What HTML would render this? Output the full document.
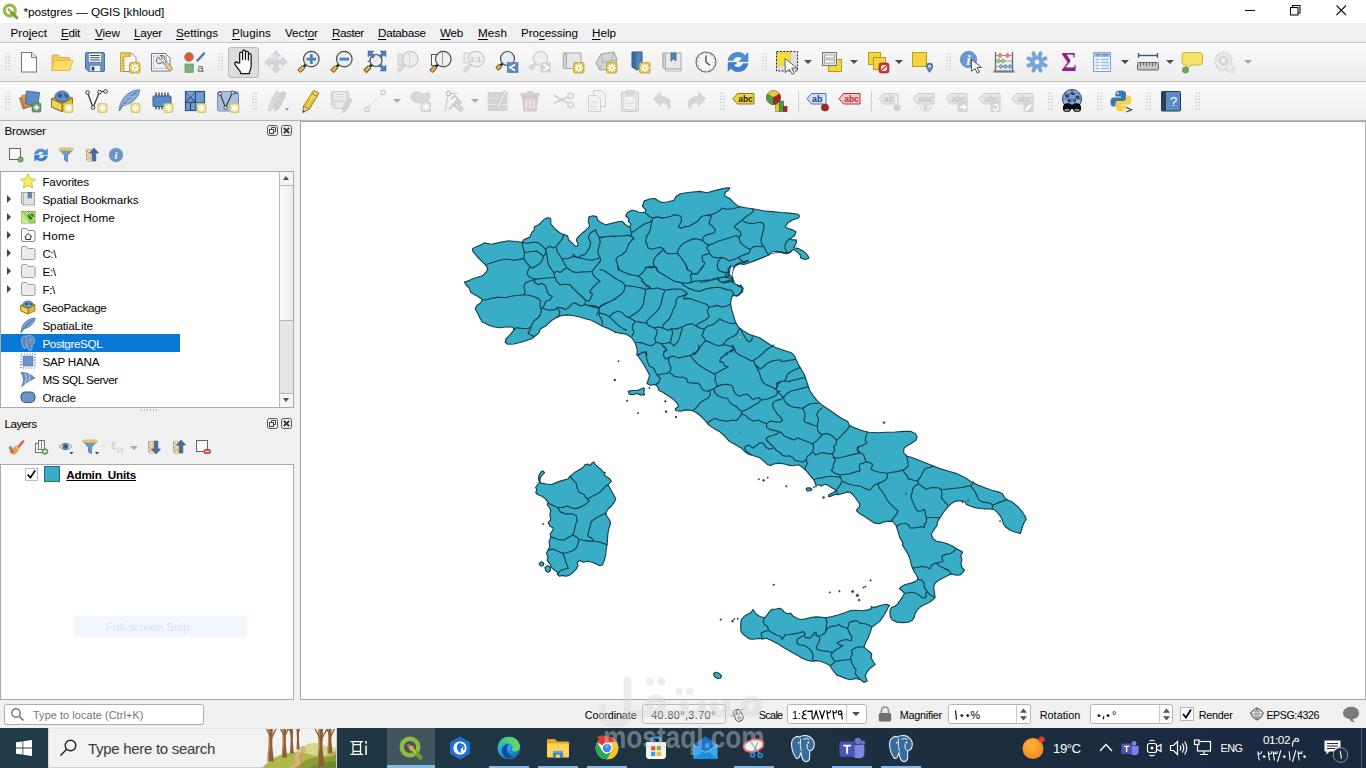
<!DOCTYPE html>
<html>
<head>
<meta charset="utf-8">
<title>*postgres — QGIS [khloud]</title>
<style>
*{box-sizing:border-box;margin:0;padding:0}
html,body{width:1366px;height:768px;overflow:hidden}
body{position:relative;background:#f0f0f0;font-family:"Liberation Sans",sans-serif;font-size:12px;color:#000}
.abs{position:absolute}
#title{left:0;top:0;width:1366px;height:23px;background:#fff}
#title .t{left:23.4px;top:5px;line-height:15px;white-space:nowrap}
#menu{left:0;top:23px;width:1366px;height:19px;background:#f0f0f0}
#menu span{position:absolute;top:2px;line-height:15px;white-space:nowrap}
#menu u{text-decoration:underline;text-underline-offset:1.5px}
#tb1{left:0;top:42px;width:1366px;height:39px;border-top:1px solid #c6c6c6;background:linear-gradient(#fafafa,#f4f4f4 40%,#eeeeee)}
#tb2{left:0;top:81px;width:1366px;height:40px;border-top:1px solid #bdbdbd;border-bottom:1px solid #b4b4b4;background:linear-gradient(#fafafa,#f5f5f5 40%,#efefef)}
.grip{position:absolute;width:6.2px;height:19.2px;background-image:radial-gradient(circle at 1px 1px,#bcbcbc .45px,rgba(188,188,188,0) .95px);background-size:3.1px 3.2px}
.ic{position:absolute;width:24px;height:24px;overflow:visible}
.dd{position:absolute;width:0;height:0;border-left:4px solid transparent;border-right:4px solid transparent;border-top:4px solid #4d4d4d;margin-left:-.5px}
.dd.dis{border-top-color:#aaa}
#canvas{left:300px;top:121px;width:1066px;height:579px;background:#fff;border:1px solid #a3a3a3;border-right-color:#b5b5b5}
.ptitle{position:absolute;left:4px;line-height:15px;white-space:nowrap}
.pbtn{position:absolute;width:11px;height:11px;border:1px solid #555;border-radius:2.5px;background:#f0f0f0}
.tree{position:absolute;background:#fff;border:1px solid #a9a9a9}
.row{position:absolute;left:0;height:18px;width:278px;line-height:18px;white-space:nowrap}
.row .lbl{position:absolute;left:41.4px;top:1px}
.row svg.i16{position:absolute;left:19px;top:1px;width:16px;height:16px;overflow:visible}
.exp{position:absolute;left:6px;top:5px;width:0;height:0;border-top:4px solid transparent;border-bottom:4px solid transparent;border-left:4.5px solid #444}
#status{left:0;top:700px;width:1366px;height:28px;background:#f0f0f0}
#status .lab{position:absolute;top:8px;line-height:14px;font-size:10.8px;white-space:nowrap}
.field{position:absolute;top:4px;height:20px;background:#fff;border:1px solid #b3b3b3;border-radius:2.5px}
#taskbar{left:0;top:728px;width:1366px;height:40px;background:linear-gradient(90deg,#203a49 0%,#1f3644 35%,#1d2f40 68%,#1b2a40 85%,#1a2840 100%)}
.ul{position:absolute;top:38px;height:2px;width:40px;background:#83b9e6}
</style>
</head>
<body>
<!-- TITLE BAR -->
<div id="title" class="abs">
  <svg class="abs" style="left:2px;top:3px" width="17" height="17" viewBox="0 0 17 17"><circle cx="7.800" cy="7.600" r="5.400" fill="none" stroke="#93bf4a" stroke-width="3.300"/><path d="M9.300 9.300L14.800 14.800" stroke="#6f9f35" stroke-width="3" stroke-linecap="round"/><path d="M5.800 5.600l4.500 1.400-1.600 1.100-1.100 1.700z" fill="#eeb04a"/><circle cx="6.700" cy="6.600" r="1.100" fill="#e2568c"/></svg>
  <div class="abs t" style="font-size:11.8px;letter-spacing:-0.058px">*postgres — QGIS [khloud]</div>
  <svg class="abs" style="left:1240px;top:0" width="126" height="23" viewBox="0 0 126 23"><g stroke="#111" stroke-width="1.1" fill="none"><path d="M5 10.5h10"/><rect x="50.5" y="7.5" width="7.5" height="7.5" fill="#fff"/><path d="M52.5 7.5v-2h7.5v7.5h-2"/><path d="M96.5 5.5l9.5 9.5M106 5.5l-9.5 9.5"/></g></svg>
</div>
<!-- MENU -->
<div id="menu" class="abs">
  <span style="left:10.5px;font-size:11.7px;letter-spacing:0.013px">Pro<u>j</u>ect</span>
  <span style="left:61px;font-size:11.7px;letter-spacing:-0.332px"><u>E</u>dit</span>
  <span style="left:95px;font-size:11.7px;letter-spacing:-0.043px"><u>V</u>iew</span>
  <span style="left:134px;font-size:11.7px;letter-spacing:-0.282px"><u>L</u>ayer</span>
  <span style="left:176px;font-size:11.7px;letter-spacing:-0.037px"><u>S</u>ettings</span>
  <span style="left:232px;font-size:11.7px;letter-spacing:0.096px"><u>P</u>lugins</span>
  <span style="left:285px;font-size:11.7px;letter-spacing:-0.031px">Vect<u>o</u>r</span>
  <span style="left:332px;font-size:11.7px;letter-spacing:-0.447px"><u>R</u>aster</span>
  <span style="left:378px;font-size:11.7px;letter-spacing:-0.278px"><u>D</u>atabase</span>
  <span style="left:440px;font-size:11.7px;letter-spacing:-0.338px"><u>W</u>eb</span>
  <span style="left:478px;font-size:11.7px;letter-spacing:0.111px"><u>M</u>esh</span>
  <span style="left:521px;font-size:11.7px;letter-spacing:-0.093px">Pro<u>c</u>essing</span>
  <span style="left:592px;font-size:11.7px;letter-spacing:-0.018px"><u>H</u>elp</span>
</div>
<!-- TOOLBAR 1 -->
<div id="tb1" class="abs">
<div class="grip" style="left:4.5px;top:10px"></div>
<svg class="ic" style="left:17.0px;top:7px" viewBox="0 0 24 24"><path d="M4.500 2.500h10l5 5v14.500h-15z" fill="#fff" stroke="#7a7a7a" stroke-width="1.100" stroke-linejoin="round"/><path d="M14.500 2.500v5h5" fill="#ececec" stroke="#7a7a7a" stroke-width="1" stroke-linejoin="round"/></svg>
<svg class="ic" style="left:50.0px;top:7px" viewBox="0 0 24 24"><path d="M2 6.5q0-1.500 1.500-1.500h5l2 2.500h8q1.500 0 1.500 1.500v11h-18z" fill="#f1c94f" stroke="#d3a83a" stroke-width=".8"/><path d="M1.500 20.500l3-10h18.500l-3.500 10z" fill="#fbdc6c" stroke="#dcb444" stroke-width=".8"/></svg>
<svg class="ic" style="left:83.0px;top:7px" viewBox="0 0 24 24"><path d="M2.5 4q0-1.500 1.500-1.500h16q1.500 0 1.500 1.500v16q0 1.500-1.500 1.500h-14l-3.500-3z" fill="#6a93c7" stroke="#456fa3" stroke-width="1"/><rect x="5.500" y="3.200" width="13" height="8.800" fill="#fafbfd" stroke="#456fa3" stroke-width=".5"/><path d="M7.200 5.500h9.600M7.200 7.700h9.600M7.200 9.900h9.600" stroke="#4a4a4a" stroke-width="1"/><rect x="7" y="15.500" width="10.500" height="6" fill="#f1f4f8" stroke="#456fa3" stroke-width=".5"/><rect x="8.700" y="16.800" width="2.600" height="3.800" fill="#3a3a3a"/></svg>
<svg class="ic" style="left:117.0px;top:7px" viewBox="0 0 24 24"><path d="M3.500 3h11l4.500 4.500v14h-15.500z" fill="#fbfbfb" stroke="#888" stroke-width="1"/><path d="M3.500 3h10v3.500h-6.500v15h-3.500z" fill="#f1d46a" stroke="#c9a436" stroke-width=".9"/><path d="M5 8h1.500M5 10.500h1.500M5 13h1.500M5 15.500h1.500M5 18h1.500M9 4.200v1.500M11.500 4.200v1.500" stroke="#a5831f" stroke-width=".8"/><rect x="12.5" y="12.5" width="10.5" height="10.5" rx="1.5" fill="#e0bf48" stroke="#c4a234" stroke-width=".8"/><path d="M21.5 17.8L14.0 17.8M17.8 21.5L17.8 14.0M20.4 20.4L15.1 15.1M20.4 15.1L15.1 20.4" stroke="#fff" stroke-width="1.5" stroke-linecap="round"/><circle cx="17.8" cy="17.8" r="1.1" fill="#e0bf48"/></svg>
<svg class="ic" style="left:149.0px;top:7px" viewBox="0 0 24 24"><path d="M2.500 3.500h14l4.500 4.500v13h-18.500z" fill="#fbfbfb" stroke="#777" stroke-width="1"/><rect x="4.500" y="6" width="13" height="12.500" fill="#eef1f5" stroke="#aab" stroke-width=".7"/><path d="M9.500 7.500a3.200 3.200 0 1 0 4 4.200l2 2 2.200-2.200-2-2a3.200 3.200 0 0 0-4.200-4l2 2.200-1.800 1.800z" fill="#dfe3e8" stroke="#4a4a4a" stroke-width=".9" stroke-linejoin="round"/><path d="M15 13.700l2.300-2.300 5.700 6.300q.8 1.500-.5 2.600t-2.500 0z" fill="#ebcc96" stroke="#8a6a38" stroke-width=".8" stroke-linejoin="round"/></svg>
<svg class="ic" style="left:182.0px;top:7px" viewBox="0 0 24 24"><circle cx="7" cy="7" r="4.400" fill="#d2603a" stroke="#b04a26" stroke-width=".5"/><rect x="3" y="14" width="8.300" height="8.300" fill="#7db07a" stroke="#5a9257" stroke-width=".7"/><path d="M15.500 10.500l6.500-7" stroke="#4a7ab5" stroke-width="2.500" stroke-linecap="round"/><text x="18.500" y="21.800" font-family="Liberation Sans" font-size="11.5" fill="#555" text-anchor="middle">a</text></svg>
<div class="grip" style="left:217.5px;top:10px"></div>
<div class="abs" style="left:227.5px;top:4px;width:31px;height:31px;background:#dddddd;border:1px solid #b9b9b9;border-radius:3px"></div>
<svg class="ic" style="left:231.5px;top:7px" viewBox="0 0 24 24"><path transform="translate(-1.6,-2.2) scale(1.12)" d="M8.300 13.500v-8.300q0-1.400 1.300-1.400t1.300 1.400v5.300-7q0-1.400 1.300-1.400t1.300 1.400v7-6q0-1.400 1.300-1.400t1.300 1.400v6.500-4.500q0-1.300 1.200-1.300t1.200 1.300v9.500q0 3-1.500 5.500v1.500h-8v-1.500l-4.500-6q-1.200-1.800 0-2.600 1.200-.7 2.400.8z" fill="#fff" stroke="#111" stroke-width="1.100" stroke-linejoin="round"/></svg>
<svg class="ic" style="left:264.0px;top:7px" viewBox="0 0 24 24"><path d="M12 .500l4.800 5.500h-2.800v4h4v-2.800l5.500 4.800-5.500 4.800v-2.800h-4v4h2.800l-4.800 5.500-4.800-5.500h2.800v-4h-4v2.800l-5.500-4.800 5.500-4.800v2.800h4v-4h-2.800z" fill="#d3d6d9" stroke="#c6c9cc" stroke-width=".6"/><rect x="7.500" y="4.500" width="6" height="6" fill="#dfe2e5" stroke="#cfd2d5" stroke-width=".5"/></svg>
<svg class="ic" style="left:297.0px;top:7px" viewBox="0 0 24 24"><path d="M6.6 16.8L1.9 21.5" stroke="#5a4210" stroke-width="4.4" stroke-linecap="butt"/><path d="M6.6 16.8L2.4 21.0" stroke="#e9b84e" stroke-width="2.7"/><path d="M9.1 14.3L6.6 16.8" stroke="#222" stroke-width="2.6"/><circle cx="14.3" cy="9.1" r="7.8" fill="#e9edf0" stroke="#4a4a4a" stroke-width="1.2"/><path d="M14.300 4.300v9.600M9.500 9.100h9.600" stroke="#4a7fc0" stroke-width="2.800"/></svg>
<svg class="ic" style="left:330.0px;top:7px" viewBox="0 0 24 24"><path d="M6.6 16.8L1.9 21.5" stroke="#5a4210" stroke-width="4.4" stroke-linecap="butt"/><path d="M6.6 16.8L2.4 21.0" stroke="#e9b84e" stroke-width="2.7"/><path d="M9.1 14.3L6.6 16.8" stroke="#222" stroke-width="2.6"/><circle cx="14.3" cy="9.1" r="7.8" fill="#e9edf0" stroke="#4a4a4a" stroke-width="1.2"/><path d="M9.500 9.100h9.600" stroke="#4a7fc0" stroke-width="2.800"/></svg>
<svg class="ic" style="left:363.0px;top:7px" viewBox="0 0 24 24"><path d="M6.6 16.9L1.9 21.6" stroke="#5a4210" stroke-width="4.4" stroke-linecap="butt"/><path d="M6.6 16.9L2.4 21.1" stroke="#e9b84e" stroke-width="2.7"/><path d="M9.1 14.4L6.6 16.9" stroke="#222" stroke-width="2.6"/><circle cx="13" cy="10.5" r="6" fill="#e9edf0" stroke="#4a4a4a" stroke-width="1.2"/><path d="M5 1h6l-2 2 3 3-2 2-3-3-2 2zM23 1v6l-2-2-3 3-2-2 3-3-2-2zM23 21h-6l2-2-3-3 2-2 3 3 2-2z" fill="#4a80bd" stroke="#2e5f96" stroke-width=".5"/><path d="M4 12l2-2 2 2" fill="#4a80bd"/></svg>
<svg class="ic" style="left:396.0px;top:7px" viewBox="0 0 24 24"><rect x="2" y="4" width="11" height="11" fill="#e2e2e2" stroke="#cfcfcf"/><path d="M6.6 16.8L1.9 21.5" stroke="#cccccc" stroke-width="4.4" stroke-linecap="butt"/><path d="M6.6 16.8L2.4 21.0" stroke="#dedede" stroke-width="2.7"/><path d="M9.1 14.3L6.6 16.8" stroke="#cfcfcf" stroke-width="2.6"/><circle cx="14.3" cy="9.1" r="7.8" fill="#ededed" stroke="#c6c6c6" stroke-width="1.2"/><path d="M13.500 3v12" stroke="#d4d4d4" stroke-width="1"/></svg>
<svg class="ic" style="left:429.0px;top:7px" viewBox="0 0 24 24"><rect x="2.500" y="4.500" width="10" height="11" fill="#fafafa" stroke="#555" stroke-width="1"/><path d="M6.6 16.8L1.9 21.5" stroke="#5a4210" stroke-width="4.4" stroke-linecap="butt"/><path d="M6.6 16.8L2.4 21.0" stroke="#e9b84e" stroke-width="2.7"/><path d="M9.1 14.3L6.6 16.8" stroke="#222" stroke-width="2.6"/><circle cx="14.3" cy="9.1" r="7.8" fill="#eef0f2" stroke="#4a4a4a" stroke-width="1.2"/><path d="M13.500 2.500v13" stroke="#999" stroke-width="1"/></svg>
<svg class="ic" style="left:462.0px;top:7px" viewBox="0 0 24 24"><rect x="2" y="3" width="9" height="10" fill="#ececec" stroke="#d0d0d0"/><path d="M6.6 16.8L1.9 21.5" stroke="#cccccc" stroke-width="4.4" stroke-linecap="butt"/><path d="M6.6 16.8L2.4 21.0" stroke="#dedede" stroke-width="2.7"/><path d="M9.1 14.3L6.6 16.8" stroke="#cfcfcf" stroke-width="2.6"/><circle cx="14.3" cy="9.1" r="7.8" fill="#f0f0f0" stroke="#c8c8c8" stroke-width="1.2"/><text x="13.500" y="12" font-family="Liberation Sans" font-weight="bold" font-size="8" fill="#c2c2c2" text-anchor="middle">1:1</text></svg>
<svg class="ic" style="left:495.0px;top:7px" viewBox="0 0 24 24"><path d="M5.4 15.6L1.9 19.1" stroke="#5a4210" stroke-width="4.4" stroke-linecap="butt"/><path d="M5.4 15.6L2.4 18.6" stroke="#e9b84e" stroke-width="2.7"/><path d="M7.9 13.1L5.4 15.6" stroke="#222" stroke-width="2.6"/><circle cx="12.5" cy="8.5" r="7" fill="#e9edf0" stroke="#4a4a4a" stroke-width="1.2"/><rect x="12.500" y="12.500" width="10.500" height="10" fill="#5b8bc3" stroke="#3f6fa6" stroke-width=".6"/><path d="M20 14.500l-5 3 5 3" fill="none" stroke="#fff" stroke-width="1.800"/></svg>
<svg class="ic" style="left:528.0px;top:7px" viewBox="0 0 24 24"><path d="M5.4 15.6L1.9 19.1" stroke="#cccccc" stroke-width="4.4" stroke-linecap="butt"/><path d="M5.4 15.6L2.4 18.6" stroke="#dedede" stroke-width="2.7"/><path d="M7.9 13.1L5.4 15.6" stroke="#cfcfcf" stroke-width="2.6"/><circle cx="12.5" cy="8.5" r="7" fill="#f0f0f0" stroke="#c8c8c8" stroke-width="1.2"/><rect x="12.500" y="12.500" width="10.500" height="10" fill="#d2d2d2"/><path d="M15.500 14.500l5 3-5 3" fill="none" stroke="#fff" stroke-width="1.800"/></svg>
<svg class="ic" style="left:561.0px;top:7px" viewBox="0 0 24 24"><path d="M3 3h17v14q0 1.500-1.500 1.500h-13v-14q0-1.500-2.500-1.500z" fill="#e6e6e6" stroke="#a6a6a6" stroke-width="1"/><path d="M3 3q2.500 0 2.500 2.500v13h-2q-1.500 0-1.500-1.500v-12q0-2 1-2z" fill="#cfcfcf" stroke="#a6a6a6" stroke-width=".8"/><rect x="12.5" y="12.5" width="10.5" height="10.5" rx="1.5" fill="#e0bf48" stroke="#c4a234" stroke-width=".8"/><path d="M21.5 17.8L14.0 17.8M17.8 21.5L17.8 14.0M20.4 20.4L15.1 15.1M20.4 15.1L15.1 20.4" stroke="#fff" stroke-width="1.5" stroke-linecap="round"/><circle cx="17.8" cy="17.8" r="1.1" fill="#e0bf48"/></svg>
<svg class="ic" style="left:594.0px;top:7px" viewBox="0 0 24 24"><path d="M2 13l5-9 13-2 3 8-4 9-13 1z" fill="#d4d4d4" stroke="#9a9a9a" stroke-width=".9"/><path d="M7 4l2 8-4 8M9 12l14-2M20 2l-3 9 2 8" fill="none" stroke="#aaa" stroke-width=".9"/><rect x="12.5" y="12.5" width="10.5" height="10.5" rx="1.5" fill="#e0bf48" stroke="#c4a234" stroke-width=".8"/><path d="M21.5 17.8L14.0 17.8M17.8 21.5L17.8 14.0M20.4 20.4L15.1 15.1M20.4 15.1L15.1 20.4" stroke="#fff" stroke-width="1.5" stroke-linecap="round"/><circle cx="17.8" cy="17.8" r="1.1" fill="#e0bf48"/></svg>
<svg class="ic" style="left:628.0px;top:7px" viewBox="0 0 24 24"><path d="M4 2h10v15l-5 3-5-3z" fill="#4f83be" stroke="#2c5a91" stroke-width="1"/><path d="M4 2h4v16.500l-4-1.500z" fill="#3a6aa3"/><rect x="11.5" y="12.5" width="10.5" height="10.5" rx="1.5" fill="#e0bf48" stroke="#c4a234" stroke-width=".8"/><path d="M20.5 17.8L13.0 17.8M16.8 21.5L16.8 14.0M19.4 20.4L14.1 15.1M19.4 15.1L14.1 20.4" stroke="#fff" stroke-width="1.5" stroke-linecap="round"/><circle cx="16.8" cy="17.8" r="1.1" fill="#e0bf48"/></svg>
<svg class="ic" style="left:660.0px;top:7px" viewBox="0 0 24 24"><path d="M3 3h18v16h-15q-3 0-3-2z" fill="#e9e9e9" stroke="#a8a8a8" stroke-width="1"/><path d="M3 3q2.500 0 2.500 2.500v13.500h-1q-1.500 0-1.500-2z" fill="#d2d2d2" stroke="#a8a8a8" stroke-width=".8"/><path d="M5.500 19h15.500v2h-15.500z" fill="#f3f3f3" stroke="#999" stroke-width=".6"/><path d="M11 3h5v8l-2.500-2-2.500 2z" fill="#4f83be" stroke="#2c5a91" stroke-width=".7"/></svg>
<svg class="ic" style="left:693.5px;top:7px" viewBox="0 0 24 24"><circle cx="12" cy="12" r="10" fill="#f7f7f7" stroke="#666" stroke-width="1.100"/><circle cx="12" cy="12" r="8.400" fill="none" stroke="#777" stroke-width="1.200" stroke-dasharray=".8 3.600"/><path d="M12 5.500v6.700l4 3" fill="none" stroke="#444" stroke-width="1.300"/></svg>
<svg class="ic" style="left:726.0px;top:7px" viewBox="0 0 24 24"><g transform="translate(-1.200,-1.200) scale(1.1)"><path d="M3 10.500a9 8.500 0 0 1 15.500-4.500l2.500-2.500v8h-8l2.800-2.800a5 5 0 0 0-8.300 1.800z" fill="#4b8fdc" stroke="#2e6db3" stroke-width=".5"/><path d="M21 13.500a9 8.500 0 0 1-15.500 4.500l-2.500 2.500v-8h8l-2.800 2.800a5 5 0 0 0 8.300-1.800z" fill="#3b7fd0" stroke="#2e6db3" stroke-width=".5"/></g></svg>
<div class="grip" style="left:761.5px;top:10px"></div>
<svg class="ic" style="left:775.0px;top:7px" viewBox="0 0 24 24"><rect x="1.500" y="1.500" width="21" height="19.500" fill="#dfdfdf"/><rect x="2" y="2" width="13.500" height="13.500" fill="#f5dc3f" stroke="#d8bd2a" stroke-width=".5"/><rect x="1.500" y="1.500" width="21" height="19.500" fill="none" stroke="#2a2a2a" stroke-width="1" stroke-dasharray="2 1.400"/><path d="M10 8.500l12 9.500h-5.300l2.700 5.300-2.200 1.100-2.700-5.300-4.300 3.500z" fill="#fff" stroke="#555" stroke-width=".9" stroke-linejoin="round"/></svg>
<div class="dd" style="left:804.5px;top:17px"></div>
<svg class="ic" style="left:820.0px;top:7px" viewBox="0 0 24 24"><rect x="8.500" y="9.500" width="13" height="12" fill="#f1d63f" stroke="#b89c1c" stroke-width="1"/><rect x="2.500" y="2.500" width="14" height="13" fill="#e6e6e6" stroke="#777" stroke-width="1"/><rect x="4.500" y="5" width="10" height="3" fill="#fff" stroke="#888" stroke-width=".7"/><rect x="4.500" y="10" width="10" height="3" fill="#fff" stroke="#888" stroke-width=".7"/></svg>
<div class="dd" style="left:850.5px;top:17px"></div>
<svg class="ic" style="left:866.0px;top:7px" viewBox="0 0 24 24"><rect x="2.500" y="2.500" width="12" height="12" fill="#f1d63f" stroke="#b89c1c" stroke-width="1"/><rect x="7.500" y="7.500" width="12" height="12" fill="#f1d63f" stroke="#b89c1c" stroke-width="1"/><rect x="13" y="13" width="10" height="10" rx="2" fill="#c93a3a" stroke="#8f1f1f" stroke-width=".6"/><circle cx="18" cy="18" r="3" fill="#fff"/><path d="M16 20l4-4" stroke="#c93a3a" stroke-width="1.400"/></svg>
<div class="dd" style="left:895.5px;top:17px"></div>
<svg class="ic" style="left:910.0px;top:7px" viewBox="0 0 24 24"><rect x="2.500" y="2.500" width="14" height="14" fill="#f1d63f" stroke="#b89c1c" stroke-width="1"/><path d="M19.500 13a3.300 3.300 0 0 1 3.300 3.300q0 2-3.300 6.200-3.300-4.200-3.300-6.200a3.300 3.300 0 0 1 3.300-3.300z" fill="#5a87b8" stroke="#345f8f" stroke-width=".6"/><circle cx="19.500" cy="16.300" r="1.200" fill="#fff"/></svg>
<div class="grip" style="left:946.0px;top:10px"></div>
<svg class="ic" style="left:958.5px;top:7px" viewBox="0 0 24 24"><circle cx="9.500" cy="9.500" r="8.200" fill="#6c99cf" stroke="#5a86bd" stroke-width=".8"/><text x="9.500" y="14.500" font-family="Liberation Serif" font-style="italic" font-weight="bold" font-size="14" fill="#fff" text-anchor="middle">i</text><path d="M12.500 9.500l10 8h-4.500l2.300 4.600-2 1-2.300-4.600-3.500 2.800z" fill="#fff" stroke="#444" stroke-width=".9" stroke-linejoin="round"/></svg>
<svg class="ic" style="left:992.0px;top:7px" viewBox="0 0 24 24"><path d="M3.500 2v19M20.500 2v19" stroke="#6a6a6a" stroke-width="1.300"/><path d="M1.500 21.500h21" stroke="#7a7a7a" stroke-width="2.200"/><path d="M3.500 5.500h17M3.500 11h17M3.500 16.500h17" stroke="#8a8a8a" stroke-width=".8"/><path d="M8 3.2l2.3 2.3l-2.3 2.3l-2.3 -2.3z" fill="#e58a84" stroke="#b8524a" stroke-width=".7"/><path d="M15.5 3.2l2.3 2.3l-2.3 2.3l-2.3 -2.3z" fill="#e58a84" stroke="#b8524a" stroke-width=".7"/><path d="M6.5 8.7l2.3 2.3l-2.3 2.3l-2.3 -2.3z" fill="#9ccf94" stroke="#5f9a56" stroke-width=".7"/><path d="M11 8.7l2.3 2.3l-2.3 2.3l-2.3 -2.3z" fill="#9ccf94" stroke="#5f9a56" stroke-width=".7"/><path d="M9 14.2l2.3 2.3l-2.3 2.3l-2.3 -2.3z" fill="#86aed0" stroke="#4f7fa8" stroke-width=".7"/><path d="M13.5 14.2l2.3 2.3l-2.3 2.3l-2.3 -2.3z" fill="#86aed0" stroke="#4f7fa8" stroke-width=".7"/><path d="M18 14.2l2.3 2.3l-2.3 2.3l-2.3 -2.3z" fill="#86aed0" stroke="#4f7fa8" stroke-width=".7"/></svg>
<svg class="ic" style="left:1024.5px;top:7px" viewBox="0 0 24 24"><path d="M17.55 14.28L20.60 15.54" stroke="#78a6dc" stroke-width="4.000" stroke-linecap="round"/><path d="M14.31 17.54L15.58 20.58" stroke="#78a6dc" stroke-width="4.000" stroke-linecap="round"/><path d="M9.72 17.55L8.46 20.60" stroke="#78a6dc" stroke-width="4.000" stroke-linecap="round"/><path d="M6.46 14.31L3.42 15.58" stroke="#78a6dc" stroke-width="4.000" stroke-linecap="round"/><path d="M6.45 9.72L3.40 8.46" stroke="#78a6dc" stroke-width="4.000" stroke-linecap="round"/><path d="M9.69 6.46L8.42 3.42" stroke="#78a6dc" stroke-width="4.000" stroke-linecap="round"/><path d="M14.28 6.45L15.54 3.40" stroke="#78a6dc" stroke-width="4.000" stroke-linecap="round"/><path d="M17.54 9.69L20.58 8.42" stroke="#78a6dc" stroke-width="4.000" stroke-linecap="round"/><circle cx="12" cy="12" r="6.600" fill="#78a6dc"/><circle cx="12" cy="12" r="2.900" fill="#f6f6f6" stroke="#5a8ac2" stroke-width=".7"/></svg>
<svg class="ic" style="left:1057.0px;top:7px" viewBox="0 0 24 24"><text x="12" y="21.300" font-family="Liberation Serif" font-weight="bold" font-size="27" fill="#8e1e92" text-anchor="middle" textLength="15.500" lengthAdjust="spacingAndGlyphs">Σ</text></svg>
<svg class="ic" style="left:1090.0px;top:7px" viewBox="0 0 24 24"><rect x="3.500" y="2.500" width="17" height="19" fill="#f4f8fc" stroke="#7a9fd0" stroke-width="1"/><rect x="3.500" y="2.500" width="17" height="4.500" fill="#9dbde4"/><path d="M5.500 9.500h4M11 9.500h8M5.500 12.500h4M11 12.500h8M5.500 15.500h4M11 15.500h8M5.500 18.500h4M11 18.500h8" stroke="#9dbde4" stroke-width="1.300"/><path d="M6 4.700h4M12 4.700h6" stroke="#5f8fc8" stroke-width="1.400"/></svg>
<div class="dd" style="left:1121.0px;top:17px"></div>
<svg class="ic" style="left:1136.0px;top:7px" viewBox="0 0 24 24"><path d="M2.500 5.500h19" stroke="#2f5a8c" stroke-width="1.400"/><path d="M2.500 3v5M21.500 3v5" stroke="#2f5a8c" stroke-width="1.300"/><rect x="1.500" y="12.500" width="21" height="7.500" rx="1" fill="#c4c4c4" stroke="#666" stroke-width="1"/><path d="M4.500 12.500v3.500M7.500 12.500v2.500M10.500 12.500v3.500M13.500 12.500v2.500M16.500 12.500v3.500M19.500 12.500v2.500" stroke="#555" stroke-width=".9"/></svg>
<div class="dd" style="left:1166.0px;top:17px"></div>
<svg class="ic" style="left:1180.0px;top:7px" viewBox="0 0 24 24"><path d="M5 2.500h14.500q3 0 3 3v6.500q0 3-3 3h-8.500l-4.500 4.500v-4.500h-1.500q-3 0-3-3v-6.500q0-3 3-3z" fill="#f6e36e" stroke="#c9b23a" stroke-width="1"/><circle cx="5.500" cy="20" r="3" fill="#6fa85e" stroke="#4a7f3c" stroke-width=".7"/></svg>
<svg class="ic" style="left:1213.5px;top:7px" viewBox="0 0 24 24"><path d="M9.500 1.500l1.500 2 2.500-1 .5 2.500 2.700.3-.6 2.600 2.400 1.300-1.600 2.100 1.600 2.100-2.400 1.300.6 2.600-2.700.3-.5 2.500-2.500-1-1.500 2-1.500-2-2.500 1-.5-2.500-2.700-.3.600-2.600-2.400-1.300 1.600-2.100-1.600-2.100 2.400-1.300-.6-2.600 2.700-.3.500-2.500 2.500 1z" fill="#ececec" stroke="#cdcdcd" stroke-width=".8"/><circle cx="9.500" cy="10.500" r="4.300" fill="#dcdcdc" stroke="#cacaca"/><path d="M8 8.300l4 2.200-4 2.200z" fill="#f6f6f6"/><path d="M13 12l8.500 6.500h-3.800l2 4-1.700.9-2-4-3 2.400z" fill="#f4f4f4" stroke="#cdcdcd" stroke-width=".8"/></svg>
<div class="dd dis" style="left:1244.5px;top:17px"></div>

</div>
<!-- TOOLBAR 2 -->
<div id="tb2" class="abs">
<div class="grip" style="left:4.5px;top:10px"></div>
<svg class="ic" style="left:17.5px;top:7px" viewBox="0 0 24 24"><path d="M1.500 9l11-3.500 3.500 11-11 3.500z" fill="#d8813a" stroke="#a85a1e" stroke-width=".7"/><path d="M4 6.500l11.500-2 2 11.500-11.500 2z" fill="#e9a04a" stroke="#b56d22" stroke-width=".7"/><path d="M8.500 2l13 1.500-1.500 13-13-1.500z" fill="#5c8dc4" stroke="#33619a" stroke-width=".8"/><rect x="14" y="14" width="9" height="9" rx="1.500" fill="#64986a" stroke="#4a7a50" stroke-width=".6"/><path d="M18.500 15.700v5.600M15.700 18.500h5.600" stroke="#fff" stroke-width="1.800"/></svg>
<svg class="ic" style="left:50.0px;top:7px" viewBox="0 0 24 24"><path d="M1.500 10l10-5 11 4v9l-10.500 4.500-10.500-4.500z" fill="#e6b82c" stroke="#8a6a10" stroke-width=".9"/><path d="M1.500 10l10.500 4.500 10.500-5.500M12 14.500v8" fill="none" stroke="#8a6a10" stroke-width=".9"/><path d="M1.500 10l10.500 4.500v8l-10.500-4.500z" fill="#f3d34e"/><path d="M1.500 10l10.500 4.500v8l-10.500-4.500z" fill="none" stroke="#8a6a10" stroke-width=".9"/><ellipse cx="12" cy="7.500" rx="7" ry="5.500" fill="#5f8fc6" stroke="#2d5a92" stroke-width=".8"/><path d="M7 6q2-2.500 4-1.500t1 3-3 1.500zM13.500 4q3 0 4 2.500t-2 2.500z" fill="#2f5d96"/><rect x="14" y="14.5" width="9" height="9" rx="1.3" fill="#ecd882" stroke="#d2ba55" stroke-width=".7"/><path d="M18.5 22.0L18.5 16.0M21.1 20.5L15.9 17.5M21.1 17.5L15.9 20.5" stroke="#fff" stroke-width="1.500" stroke-linecap="round"/></svg>
<svg class="ic" style="left:84.0px;top:7px" viewBox="0 0 24 24"><path d="M3.500 3.500l5.500 15 6.500-15.500 6-1" fill="none" stroke="#333" stroke-width="1.200"/><g fill="#fff" stroke="#333" stroke-width="1"><circle cx="3.500" cy="3.500" r="1.800"/><circle cx="9" cy="18.500" r="1.800"/><circle cx="15.500" cy="3" r="1.800"/><circle cx="21.500" cy="2.500" r="1.800"/></g><rect x="14" y="14.5" width="9" height="9" rx="1.3" fill="#ecd882" stroke="#d2ba55" stroke-width=".7"/><path d="M18.5 22.0L18.5 16.0M21.1 20.5L15.9 17.5M21.1 17.5L15.9 20.5" stroke="#fff" stroke-width="1.500" stroke-linecap="round"/></svg>
<svg class="ic" style="left:117.0px;top:7px" viewBox="0 0 24 24"><path d="M2 22q1-11 8-16.500t13-4.500q-1 6-6 10.500t-12 5.500z" fill="#8aa9d2" stroke="#5a7fb0" stroke-width=".8"/><path d="M2.500 22q5-10 17-19" fill="none" stroke="#4a6f9f" stroke-width="1"/><path d="M8 12l6-1M11 8.500l7-1.500M6 15.500l6-.5" stroke="#a9c6e6" stroke-width=".8"/><rect x="14" y="14.5" width="9" height="9" rx="1.3" fill="#ecd882" stroke="#d2ba55" stroke-width=".7"/><path d="M18.5 22.0L18.5 16.0M21.1 20.5L15.9 17.5M21.1 17.5L15.9 20.5" stroke="#fff" stroke-width="1.500" stroke-linecap="round"/></svg>
<svg class="ic" style="left:150.0px;top:7px" viewBox="0 0 24 24"><rect x="3" y="7" width="18" height="10.500" rx="1" fill="#5b8cc6" stroke="#2f5d96" stroke-width="1"/><path d="M6 3.500v3.500M9 3.500v3.500M12 3.500v3.500M15 3.500v3.500M18 3.500v3.500M6 17.500v3M9 17.500v3M12 17.500v3" stroke="#2f4f7a" stroke-width="1.400"/><rect x="14" y="14.5" width="9" height="9" rx="1.3" fill="#ecd882" stroke="#d2ba55" stroke-width=".7"/><path d="M18.5 22.0L18.5 16.0M21.1 20.5L15.9 17.5M21.1 17.5L15.9 20.5" stroke="#fff" stroke-width="1.500" stroke-linecap="round"/></svg>
<svg class="ic" style="left:183.0px;top:7px" viewBox="0 0 24 24"><rect x="2.500" y="2.500" width="19" height="19" fill="#6e9bd0" stroke="#2a4f80" stroke-width="1.200"/><path d="M12.500 2.500v19M2.500 13.500h19M2.500 2.500l10 11M12.500 2.500l-10 11M7.500 13.500v8" stroke="#24466f" stroke-width="1.100" fill="none"/><path d="M2.500 2.500h10l-5 5.500zM12.500 13.500h9v8h-9z" fill="#86aede" opacity=".7"/><rect x="14" y="14.5" width="9" height="9" rx="1.3" fill="#ecd882" stroke="#d2ba55" stroke-width=".7"/><path d="M18.5 22.0L18.5 16.0M21.1 20.5L15.9 17.5M21.1 17.5L15.9 20.5" stroke="#fff" stroke-width="1.500" stroke-linecap="round"/></svg>
<svg class="ic" style="left:215.5px;top:7px" viewBox="0 0 24 24"><rect x="1.500" y="2.500" width="21" height="19.500" rx="2" fill="#a9c1e0" stroke="#6a8fbc" stroke-width="1"/><path d="M4 4.500l5.500 14 7-15 5 1" fill="none" stroke="#333" stroke-width="1.100"/><g fill="#fff" stroke="#333" stroke-width=".9"><circle cx="4" cy="4.500" r="1.600"/><circle cx="9.500" cy="18.500" r="1.600"/><circle cx="16.500" cy="3.500" r="1.600"/></g><rect x="14" y="14.5" width="9" height="9" rx="1.3" fill="#ecd882" stroke="#d2ba55" stroke-width=".7"/><path d="M18.5 22.0L18.5 16.0M21.1 20.5L15.9 17.5M21.1 17.5L15.9 20.5" stroke="#fff" stroke-width="1.500" stroke-linecap="round"/></svg>
<div class="grip" style="left:251.5px;top:10px"></div>
<svg class="ic" style="left:265.0px;top:7px" viewBox="0 0 24 24"><path d="M11 2l4.500 2-7 15-5 3.500.5-6z" fill="#d9d9d9" stroke="#cfcfcf" stroke-width=".6"/><path d="M17 2l4.500 2-7 15-5 3.500.5-6z" fill="#d2d2d2" stroke="#c8c8c8" stroke-width=".6"/></svg>
<div class="dd dis" style="left:285px;top:26px;border-left-width:2.500px;border-right-width:2.500px;border-top-width:3px;border-top-color:#999"></div>
<svg class="ic" style="left:297.5px;top:7px" viewBox="0 0 24 24"><path d="M15.500 1.500l5.500 2.500-9.500 16-6.500 3.500.5-6.500z" fill="#f3d646" stroke="#8a7418" stroke-width=".9" stroke-linejoin="round"/><path d="M13.500 4.500l5.500 2.600" stroke="#8a7418" stroke-width=".8"/><path d="M12 9.500l-4.500 8.500M15 10.500l-5 9" stroke="#c2a421" stroke-width=".9"/><path d="M5.500 17l5.500 3-6 3.500z" fill="#e7c9a0" stroke="#8a7418" stroke-width=".6"/><path d="M5.200 21.200l1.800 1-2 1.300z" fill="#333"/></svg>
<svg class="ic" style="left:329.0px;top:7px" viewBox="0 0 24 24"><path d="M2.500 3.500q0-1 1-1h15q1 0 1 1v15q0 1-1 1h-13l-3-3z" fill="#dedede" stroke="#cdcdcd" stroke-width="1"/><rect x="5.500" y="3.500" width="11" height="7" fill="#efefef"/><path d="M7 5.500h8M7 8h8" stroke="#d0d0d0" stroke-width=".9"/><rect x="6.500" y="13.500" width="8" height="5.500" fill="#ebebeb"/><path d="M20.500 9.500l2.500 1.500-6 10.500-3.500 2 .3-4z" fill="#d4d4d4" stroke="#c6c6c6" stroke-width=".6"/></svg>
<svg class="ic" style="left:362.5px;top:7px" viewBox="0 0 24 24"><path d="M4 20.500l16-17" stroke="#c8c8c8" stroke-width="1" stroke-dasharray="2 2"/><rect x="2" y="18.500" width="4" height="4" fill="#f0f0f0" stroke="#c4c4c4" stroke-width=".9"/><rect x="18" y="1.500" width="4" height="4" fill="#f0f0f0" stroke="#c4c4c4" stroke-width=".9"/></svg>
<div class="dd dis" style="left:393.5px;top:17px"></div>
<svg class="ic" style="left:408.0px;top:7px" viewBox="0 0 24 24"><path d="M3 8q0-5 5-5 3 0 5.500 1.500t5-.5q3.500-1 3.500 3t-3.500 5.500q-3 1-6 1t-5.500-.5q-4-1-4-5z" fill="#d8d8d8" stroke="#cbcbcb" stroke-width=".8"/><rect x="13" y="13" width="9.5" height="9.5" rx="1.3" fill="#dadada" stroke="#cacaca" stroke-width=".7"/><path d="M17.8 20.9L17.8 14.6M20.5 19.3L15.0 16.2M20.5 16.2L15.0 19.3" stroke="#fff" stroke-width="1.500" stroke-linecap="round"/></svg>
<svg class="ic" style="left:441.0px;top:7px" viewBox="0 0 24 24"><path d="M4 22l3.500-17.500h9" fill="none" stroke="#c6c6c6" stroke-width="1"/><circle cx="7.500" cy="4.500" r="2.300" fill="#f0f0f0" stroke="#c2a0a0" stroke-width=".9"/><path d="M8 20.500l10-10M10 10l3.500-3 6 6-2 2.500M14 12l7.500 8-2 2-8-7.500" fill="none" stroke="#cdcdcd" stroke-width="2.200"/></svg>
<div class="dd dis" style="left:471.0px;top:17px"></div>
<svg class="ic" style="left:485.5px;top:7px" viewBox="0 0 24 24"><rect x="2" y="3.500" width="19" height="5" fill="#d6d6d6" stroke="#c8c8c8" stroke-width=".6"/><rect x="2" y="10" width="19" height="5" fill="#d6d6d6" stroke="#c8c8c8" stroke-width=".6"/><rect x="2" y="16.500" width="19" height="5" fill="#d6d6d6" stroke="#c8c8c8" stroke-width=".6"/><path d="M18 1.500l3.500 1.800-7.500 15-4 2.700.3-4.500z" fill="#e2e2e2" stroke="#c2c2c2" stroke-width=".8"/></svg>
<svg class="ic" style="left:518.0px;top:7px" viewBox="0 0 24 24"><path d="M4.500 8h15l-1.500 14h-12z" fill="#dccfcf" stroke="#cdbcbc" stroke-width=".8"/><rect x="3" y="4.500" width="18" height="3" fill="#d9cccc" stroke="#cdbcbc" stroke-width=".6"/><rect x="9" y="2" width="6" height="2.500" fill="#d9cccc"/><path d="M8.500 11v8M12 11v8M15.500 11v8" stroke="#f1eaea" stroke-width="1.400"/></svg>
<svg class="ic" style="left:551.5px;top:7px" viewBox="0 0 24 24"><path d="M2.500 6.500l13 7.500M2.500 14l13-6" stroke="#cfcfcf" stroke-width="1.800" stroke-linecap="round"/><circle cx="18.500" cy="7" r="2.800" fill="none" stroke="#d2d2d2" stroke-width="1.500"/><circle cx="18.500" cy="16" r="2.800" fill="none" stroke="#d2d2d2" stroke-width="1.500"/></svg>
<svg class="ic" style="left:584.5px;top:7px" viewBox="0 0 24 24"><path d="M8.500 1.500h8l4 4v12h-12z" fill="#f2f2f2" stroke="#cbcbcb" stroke-width=".9"/><path d="M3.500 6.500h8l4 4v12h-12z" fill="#f4f4f4" stroke="#cbcbcb" stroke-width=".9"/><path d="M5.500 12.500h7M5.500 15h7M5.500 17.500h7M5.500 20h7" stroke="#d6d6d6" stroke-width=".9"/></svg>
<svg class="ic" style="left:618.0px;top:7px" viewBox="0 0 24 24"><rect x="3.500" y="3" width="17" height="19.500" rx="1" fill="#e4e4e4" stroke="#cbcbcb" stroke-width=".9"/><rect x="8.500" y="1.500" width="7" height="3.500" fill="#dcdcdc" stroke="#c8c8c8" stroke-width=".7"/><path d="M6 7h9l3 3v10.500h-12z" fill="#f5f5f5" stroke="#cfcfcf" stroke-width=".8"/><path d="M8 12h8M8 14.500h8M8 17h8" stroke="#d9d9d9" stroke-width=".9"/></svg>
<svg class="ic" style="left:651.0px;top:7px" viewBox="0 0 24 24"><path d="M2 9.500l8-7v4.500q10 0 10 8 0 4-3 6 1-7-7-7v4.500z" fill="#d6d6d6"/></svg>
<svg class="ic" style="left:684.0px;top:7px" viewBox="0 0 24 24"><path d="M22 9.500l-8-7v4.500q-10 0-10 8 0 4 3 6-1-7 7-7v4.500z" fill="#d6d6d6"/></svg>
<div class="grip" style="left:719.5px;top:10px"></div>
<svg class="ic" style="left:731.5px;top:7px" viewBox="0 0 24 24"><path d="M1 9.75L5.5 4.5h16.5v10.5h-16.5z" fill="#f2d53c" stroke="#8f7a14" stroke-width="1"/><text x="13.5" y="12.8" font-family="Liberation Sans" font-weight="bold" font-size="8.5" fill="#222" text-anchor="middle">abc</text></svg>
<svg class="ic" style="left:765.0px;top:7px" viewBox="0 0 24 24"><circle cx="8.500" cy="8.500" r="7" fill="#e9cb3a" stroke="#555" stroke-width=".6"/><path d="M8.500 8.500l-6.060-3.500a7 7 0 0 0 6.060 10.500z" fill="#4f9a4a" stroke="#2f6a2c" stroke-width=".5"/><path d="M8.500 8.500v7a7 7 0 0 0 6.060-10.500z" fill="#a82626" stroke="#6a1414" stroke-width=".5"/><rect x="10.500" y="15" width="4" height="7.500" fill="#e9cb3a" stroke="#8f7a14" stroke-width=".6"/><rect x="14.500" y="12" width="4" height="10.500" fill="#4f9a4a" stroke="#2f6a2c" stroke-width=".6"/><rect x="18.500" y="17.500" width="3.500" height="5" fill="#a82626" stroke="#6a1414" stroke-width=".6"/></svg>
<div class="abs" style="left:798px;top:9px;width:1px;height:21px;background:#cfcfcf"></div>
<svg class="ic" style="left:806.0px;top:7px" viewBox="0 0 24 24"><path d="M1 9.75L5.5 4.5h14.5v10.5h-14.5z" fill="#cfe2f6" stroke="#3f78b8" stroke-width="1"/><text x="11.2" y="12.8" font-family="Liberation Sans" font-weight="bold" font-size="8.8" fill="#1d3f6a" text-anchor="middle">ab</text><path d="M18.300 8v8" stroke="#f6f6f6" stroke-width="1.500" stroke-linecap="round"/><circle cx="19" cy="18.500" r="3.600" fill="#a82626" stroke="#6f1414" stroke-width=".6"/></svg>
<svg class="ic" style="left:838.0px;top:7px" viewBox="0 0 24 24"><path d="M1 9.75L5.5 4.5h16.5v10.5h-16.5z" fill="#f1c9c9" stroke="#c02a2a" stroke-width="1"/><text x="13.5" y="12.8" font-family="Liberation Sans" font-weight="bold" font-size="8.5" fill="#c02a2a" text-anchor="middle">abc</text></svg>
<div class="abs" style="left:871px;top:9px;width:1px;height:21px;background:#cfcfcf"></div>
<svg class="ic" style="left:878.0px;top:7px" viewBox="0 0 24 24"><path d="M1 9.75L5.5 4.5h14.5v10.5h-14.5z" fill="#e6e6e6" stroke="#cdcdcd" stroke-width="1"/><text x="11.2" y="12.8" font-family="Liberation Sans" font-weight="bold" font-size="8.8" fill="#c4c4c4" text-anchor="middle">ab</text><path d="M18.300 8v8" stroke="#f4f4f4" stroke-width="1.500" stroke-linecap="round"/><circle cx="19" cy="18.500" r="3.600" fill="#d2d2d2"/></svg>
<svg class="ic" style="left:911.5px;top:7px" viewBox="0 0 24 24"><path d="M1 9.75L5.5 4.5h16.5v10.5h-16.5z" fill="#e6e6e6" stroke="#cdcdcd" stroke-width="1"/><text x="13.5" y="12.8" font-family="Liberation Sans" font-weight="bold" font-size="8.5" fill="#c4c4c4" text-anchor="middle">abc</text><path d="M8 19q5.500-6 11 0-5.500 6-11 0z" fill="#f4f4f4" stroke="#cbcbcb" stroke-width=".9"/><circle cx="13.500" cy="19" r="2" fill="#d0d0d0"/></svg>
<svg class="ic" style="left:945.0px;top:7px" viewBox="0 0 24 24"><path d="M1 9.75L5.5 4.5h16.5v10.5h-16.5z" fill="#e6e6e6" stroke="#cdcdcd" stroke-width="1"/><text x="13.5" y="12.8" font-family="Liberation Sans" font-weight="bold" font-size="8.5" fill="#c4c4c4" text-anchor="middle">abc</text><rect x="12.500" y="13" width="10" height="10" rx="1.500" fill="#d4d4d4"/><path d="M14.500 18h6M18 15.500l2.800 2.500-2.800 2.500" fill="none" stroke="#fff" stroke-width="1.600"/></svg>
<svg class="ic" style="left:978.0px;top:7px" viewBox="0 0 24 24"><path d="M1 9.75L5.5 4.5h16.5v10.5h-16.5z" fill="#e6e6e6" stroke="#cdcdcd" stroke-width="1"/><text x="13.5" y="12.8" font-family="Liberation Sans" font-weight="bold" font-size="8.5" fill="#c4c4c4" text-anchor="middle">abc</text><rect x="12.500" y="13" width="10" height="10" rx="1.500" fill="#d4d4d4"/><path d="M15 19.500a2.800 2.800 0 1 0 1-3.500" fill="none" stroke="#fff" stroke-width="1.500"/></svg>
<svg class="ic" style="left:1011.0px;top:7px" viewBox="0 0 24 24"><path d="M1 9.75L5.5 4.5h16.5v10.5h-16.5z" fill="#e6e6e6" stroke="#cdcdcd" stroke-width="1"/><text x="13.5" y="12.8" font-family="Liberation Sans" font-weight="bold" font-size="8.5" fill="#c4c4c4" text-anchor="middle">abc</text><rect x="12.500" y="13" width="10" height="10" rx="1.500" fill="#d4d4d4"/><path d="M15 21l5-5.500" stroke="#fff" stroke-width="2.400"/></svg>
<div class="grip" style="left:1047.5px;top:10px"></div>
<svg class="ic" style="left:1060.0px;top:7px" viewBox="0 0 24 24"><circle cx="12" cy="10" r="9.500" fill="#8db3dd" stroke="#27405f" stroke-width="1"/><path d="M12 .500v19M2.500 10h19M4.500 4.500h15M4.500 15.500h15M12 .500q-6 9.500 0 19M12 .500q6 9.500 0 19" fill="none" stroke="#3a5a84" stroke-width=".6"/><path d="M4.500 5.500h4.500v3h-3.500zM10.500 3.500h4v2.500h-3zM15.500 6.500h4v3.500h-3.500zM7.500 10.500h3.500v2.500h-3.500zM13 10.500h3v2h-3z" fill="#1e3556" opacity=".85"/><path d="M3 18.500q0-3.500 3-4l2.500-.5q1.500 0 1.500 1.500h4q0-1.500 1.500-1.500l2.500.5q3 .5 3 4v1.500q0 3-4 3t-4-3h-2q0 3-4 3t-4-3z" fill="#0a0a0a"/><ellipse cx="7" cy="21" rx="2.600" ry="1.300" fill="#8a8a8a"/><ellipse cx="17" cy="21" rx="2.600" ry="1.300" fill="#8a8a8a"/></svg>
<div class="grip" style="left:1097.0px;top:10px"></div>
<svg class="ic" style="left:1109.0px;top:7px" viewBox="0 0 24 24"><path d="M11.500 1.500q-5 0-5 3v3h5.500v1h-7.500q-3 0-3 4.500t3 4.500h2v-2.500q0-3 3-3h5q2.500 0 2.500-2.500v-5q0-3-5.500-3z" fill="#3b77a8"/><circle cx="8.800" cy="4.300" r="1" fill="#fff"/><path d="M12.500 22.500q5 0 5-3v-3h-5.500v-1h7.500q3 0 3-4.500t-3-4.500h-2v2.500q0 3-3 3h-5q-2.500 0-2.500 2.500v5q0 3 5.500 3z" fill="#f7cf48"/><circle cx="15.200" cy="19.700" r="1" fill="#fff"/><path d="M17.500 18.500l5 2.200-5 2.200" fill="none" stroke="#333" stroke-width="1.100"/></svg>
<div class="grip" style="left:1146.0px;top:10px"></div>
<svg class="ic" style="left:1159.0px;top:7px" viewBox="0 0 24 24"><rect x="2.500" y="2.500" width="19" height="19.500" rx="1" fill="#5b8cc6" stroke="#26374d" stroke-width="1"/><rect x="2.500" y="2.500" width="4.500" height="19.500" fill="#2b3e57"/><text x="14.500" y="17" font-family="Liberation Sans" font-size="13" fill="#fff" text-anchor="middle">?</text></svg>
<div class="grip" style="left:1194.5px;top:10px"></div>

</div>
<!-- BROWSER PANEL -->
<div id="browser" class="abs" style="left:0;top:122px;width:300px;height:290px">
<div class="ptitle" style="top:1px;left:4.5px;font-size:11.7px;letter-spacing:-0.248px">Browser</div>
<div class="pbtn" style="left:267px;top:3px"><svg class="abs" style="left:0;top:0" width="9" height="9" viewBox="0 0 9 9"><rect x="1.500" y="3.500" width="4" height="4" fill="none" stroke="#444" stroke-width="1"/><path d="M3.500 3.500v-2h4v4h-2" fill="none" stroke="#444" stroke-width="1"/></svg></div><div class="pbtn" style="left:281px;top:3px"><svg class="abs" style="left:0;top:0" width="9" height="9" viewBox="0 0 9 9"><path d="M1.800 1.800l5.400 5.400M7.200 1.800l-5.400 5.400" stroke="#333" stroke-width="1.900"/></svg></div>
<svg class="abs" style="left:8.0px;top:25px;overflow:visible" width="16" height="16" viewBox="0 0 16 16"><rect x="1.500" y="1.500" width="11" height="11" fill="#fafafa" stroke="#666" stroke-width="1"/><circle cx="12.500" cy="12.500" r="2.600" fill="#7ab86a" stroke="#3f7a33" stroke-width=".8"/></svg>
<svg class="abs" style="left:33.0px;top:25px;overflow:visible" width="16" height="16" viewBox="0 0 16 16"><path d="M1.500 7a6.500 6 0 0 1 11-3.300l2-2v6h-6l2.200-2.200a3.600 3.600 0 0 0-6 1.500z" fill="#4b8fdc" stroke="#2e6db3" stroke-width=".4"/><path d="M14.500 9a6.500 6 0 0 1-11 3.300l-2 2v-6h6l-2.200 2.200a3.600 3.600 0 0 0 6-1.500z" fill="#3b7fd0" stroke="#2e6db3" stroke-width=".4"/></svg>
<svg class="abs" style="left:58.0px;top:25px;overflow:visible" width="16" height="16" viewBox="0 0 16 16"><path d="M1.500 2.500h13l-5 6v6l-3-1.500v-4.500z" fill="#6a9bd2" stroke="#4a78ae" stroke-width=".8"/><rect x="1" y="1" width="14" height="2.800" rx="1.200" fill="#e6d06c" stroke="#bfa640" stroke-width=".6"/></svg>
<svg class="abs" style="left:84.0px;top:25px;overflow:visible" width="16" height="16" viewBox="0 0 16 16"><path d="M2.500 2v11M2.500 4h3M2.500 8.500h3M2.500 13h3" fill="none" stroke="#999" stroke-width=".8"/><rect x="4" y="2.500" width="3" height="3" fill="#fdeecb" stroke="#dd9a3a" stroke-width=".7"/><rect x="4" y="7" width="3" height="3" fill="#fdeecb" stroke="#dd9a3a" stroke-width=".7"/><rect x="4" y="11.500" width="3" height="3" fill="#fdeecb" stroke="#dd9a3a" stroke-width=".7"/><path d="M10 1l4.500 5h-2.700v8h-3.600v-8h-2.700z" fill="#456f9f" stroke="#2c4f78" stroke-width=".6"/></svg>
<svg class="abs" style="left:108.0px;top:25px;overflow:visible" width="16" height="16" viewBox="0 0 16 16"><circle cx="8" cy="8" r="6.800" fill="#6a95c8" stroke="#5583b8" stroke-width=".6"/><text x="8" y="12" font-family="Liberation Serif" font-style="italic" font-weight="bold" font-size="11" fill="#fff" text-anchor="middle">i</text></svg>
<div class="tree" style="left:0;top:49px;width:294px;height:237px">
<div class="row" style="top:0px"><svg class="i16" style="left:19px;top:1px" viewBox="0 0 16 16"><path d="M8 .8l2.200 4.900 5.300.5-4 3.600 1.200 5.200-4.700-2.800-4.700 2.800 1.200-5.200-4-3.600 5.300-.5z" fill="#f4ee62" stroke="#cdb63a" stroke-width=".9" stroke-linejoin="round"/></svg><span class="lbl" style="font-size:11.7px;letter-spacing:-0.178px">Favorites</span></div>
<div class="row" style="top:18px"><i class="exp"></i><svg class="i16" style="left:19px;top:1px" viewBox="0 0 16 16"><path d="M1.500 1.500h13v12h-11q-2 0-2-1.500z" fill="#e2e2e2" stroke="#9a9a9a" stroke-width=".9"/><path d="M1.500 1.500q2 0 2 2v10.500" fill="none" stroke="#aaa" stroke-width=".8"/><path d="M3.500 13.500h11v1.500h-11z" fill="#f4f4f4" stroke="#aaa" stroke-width=".5"/><path d="M8 1.500h3.500v6l-1.750-1.500-1.750 1.500z" fill="#5a86b8" stroke="#3a648f" stroke-width=".6"/></svg><span class="lbl" style="font-size:11.7px;letter-spacing:-0.075px">Spatial Bookmarks</span></div>
<div class="row" style="top:36px"><i class="exp"></i><svg class="i16" style="left:19px;top:1px" viewBox="0 0 16 16"><rect x="1.500" y="2.500" width="13.500" height="11.500" fill="#a2d25c" stroke="#7fb23e" stroke-width="1"/><path d="M1.500 2.500l8 11.500h-8z" fill="#c2e58c"/><path d="M8 5h5.500v3.500l-2.800 2.500-2.700-2.500z" fill="#2f7a2a"/><path d="M6 2.500l9 8M1.500 9l6 5" stroke="#e4f4cf" stroke-width=".8"/></svg><span class="lbl" style="font-size:11.7px;letter-spacing:0.15px">Project Home</span></div>
<div class="row" style="top:54px"><i class="exp"></i><svg class="i16" style="left:19px;top:1px" viewBox="0 0 16 16"><path d="M1.500 3q0-1.500 1.500-1.500h3.500l1.500 2h5.500q1.500 0 1.500 1.500v8q0 1.500-1.500 1.500h-10.500q-1.500 0-1.500-1.500z" fill="#fafafa" stroke="#8a8a8a" stroke-width="1"/><path d="M4.500 10l3.700-3.500 3.700 3.500M5.800 9.300v3.200h4.800v-3.200" fill="none" stroke="#333" stroke-width="1"/></svg><span class="lbl" style="font-size:11.7px;letter-spacing:0.397px">Home</span></div>
<div class="row" style="top:72px"><i class="exp"></i><svg class="i16" style="left:19px;top:1px" viewBox="0 0 16 16"><path d="M1.500 3q0-1.500 1.500-1.500h3.500l1.500 2h5.500q1.500 0 1.500 1.500v8q0 1.500-1.500 1.500h-10.500q-1.500 0-1.500-1.500z" fill="#ececec" stroke="#9d9d9d" stroke-width="1"/></svg><span class="lbl" style="font-size:11.7px;letter-spacing:-0.46px">C:\</span></div>
<div class="row" style="top:90px"><i class="exp"></i><svg class="i16" style="left:19px;top:1px" viewBox="0 0 16 16"><path d="M1.500 3q0-1.500 1.500-1.500h3.500l1.500 2h5.500q1.500 0 1.500 1.500v8q0 1.500-1.500 1.500h-10.500q-1.500 0-1.500-1.500z" fill="#ececec" stroke="#9d9d9d" stroke-width="1"/></svg><span class="lbl" style="font-size:11.7px;letter-spacing:-0.402px">E:\</span></div>
<div class="row" style="top:108px"><i class="exp"></i><svg class="i16" style="left:19px;top:1px" viewBox="0 0 16 16"><path d="M1.500 3q0-1.500 1.500-1.500h3.500l1.500 2h5.500q1.500 0 1.500 1.500v8q0 1.500-1.500 1.500h-10.500q-1.500 0-1.500-1.500z" fill="#ececec" stroke="#9d9d9d" stroke-width="1"/></svg><span class="lbl" style="font-size:11.7px;letter-spacing:-0.339px">F:\</span></div>
<div class="row" style="top:126px"><svg class="i16" style="left:19px;top:1px" viewBox="0 0 16 16"><path d="M.8 6.500l6.700-3.500 7.500 2.800v6l-7 3.200-7.200-3.200z" fill="#e6b82c" stroke="#8a6a10" stroke-width=".8"/><path d="M.8 6.500l7.200 3 7-3.700M8 9.500v5.500" fill="none" stroke="#8a6a10" stroke-width=".8"/><path d="M.8 6.500l7.200 3v5.500l-7.200-3.200z" fill="#f3d34e" stroke="#8a6a10" stroke-width=".8"/><ellipse cx="8" cy="5.300" rx="5" ry="3.400" fill="#7a9cc6" stroke="#3a5f8f" stroke-width=".7"/><path d="M4.500 4.800q1.500-1.800 3-1t.5 1.800-2 .800zM9 3.300q2 0 2.700 1.500t-1.400 1.500z" fill="#2f4f78"/></svg><span class="lbl" style="font-size:11.7px;letter-spacing:-0.352px">GeoPackage</span></div>
<div class="row" style="top:144px"><svg class="i16" style="left:19px;top:1px" viewBox="0 0 16 16"><path d="M1 15.500q.5-8 5.500-11.500t9-3q-1 4.500-4.500 7.500t-8.500 3.500z" fill="#7aa3d4" stroke="#3d6a9f" stroke-width=".7"/><path d="M1.300 15.500q3.500-7 12-13" fill="none" stroke="#2f5b8f" stroke-width=".8"/></svg><span class="lbl" style="font-size:11.7px;letter-spacing:-0.152px">SpatiaLite</span></div>
<div class="row" style="top:162px;width:179px;background:#0a78d6;color:#fff"><svg class="i16" style="left:19px;top:1px" viewBox="0 0 16 16"><path d="M3.500 1.500q-2.500 1-2 5t2.500 6.500q1 1 2-.5l1-3q.5 3.500 1.500 5t2.500 1q1-.5 1-3v-3q2 0 2.500-2.500t-1-4.500-4-2-3.500 1q-1.500-1-3 0z" fill="#5f86b8" stroke="#a9c3e4" stroke-width=".8"/><path d="M6.500 2.500q-.5 4 .5 7M11 9.500q-1.500-1-1-4" fill="none" stroke="#a9c3e4" stroke-width=".6"/><circle cx="10.800" cy="4.800" r=".6" fill="#fff"/></svg><span class="lbl" style="font-size:11.7px;letter-spacing:-0.372px">PostgreSQL</span></div>
<div class="row" style="top:180px"><svg class="i16" style="left:19px;top:1px" viewBox="0 0 16 16"><rect x="3" y="3" width="10" height="10" fill="#6f93c6" stroke="#4a74a8" stroke-width=".6"/><rect x="1" y="1" width="14" height="14" fill="none" stroke="#3f6a9f" stroke-width="1.200" stroke-dasharray="1.100 1.700"/></svg><span class="lbl" style="font-size:11.7px;letter-spacing:-0.261px">SAP HANA</span></div>
<div class="row" style="top:198px"><svg class="i16" style="left:19px;top:1px" viewBox="0 0 16 16"><path d="M1 1.500q7-.5 14 5.500-7 3-13.500 8.500 4-7-.5-14z" fill="#6f93c6" stroke="#3f6a9f" stroke-width=".7"/><path d="M5 2q3 5 0 11M9 3.500q2 3.500-.5 7" fill="none" stroke="#d0dff0" stroke-width=".8"/></svg><span class="lbl" style="font-size:11.7px;letter-spacing:-0.471px">MS SQL Server</span></div>
<div class="row" style="top:216px"><svg class="i16" style="left:19px;top:1px" viewBox="0 0 16 16"><rect x="1" y="3" width="14" height="10.500" rx="4.500" fill="#6f93c6" stroke="#345a8a" stroke-width="1.100"/></svg><span class="lbl" style="font-size:11.7px;letter-spacing:-0.157px">Oracle</span></div>
<div class="abs" style="left:278px;top:0;width:14px;height:235px;background:linear-gradient(90deg,#fafafa,#ececec);border-left:1px solid #b9b9b9"></div><div class="abs" style="left:279px;top:0;width:13px;height:14px;background:#f5f5f5;border-bottom:1px solid #b5b5b5"></div><div class="abs" style="left:282px;top:4px;width:0;height:0;border-left:3.500px solid transparent;border-right:3.500px solid transparent;border-bottom:4px solid #505050"></div><div class="abs" style="left:279px;top:148px;width:13px;height:73px;background:#e5e5e5;border-top:1px solid #b5b5b5"></div><div class="abs" style="left:279px;top:221px;width:13px;height:14px;background:#f5f5f5;border-top:1px solid #b5b5b5"></div><div class="abs" style="left:282px;top:226px;width:0;height:0;border-left:3.500px solid transparent;border-right:3.500px solid transparent;border-top:4px solid #505050"></div></div>
<div class="abs" style="left:140px;top:287px;width:17px;height:2px;background-image:radial-gradient(circle,#b5b5b5 .6px,transparent .9px);background-size:3px 2px"></div>

</div>
<!-- LAYERS PANEL -->
<div id="layers" class="abs" style="left:0;top:412px;width:300px;height:288px">
<div class="ptitle" style="top:4px;left:4.5px;font-size:11.7px;letter-spacing:-0.512px">Layers</div>
<div class="pbtn" style="left:267px;top:6px"><svg class="abs" style="left:0;top:0" width="9" height="9" viewBox="0 0 9 9"><rect x="1.500" y="3.500" width="4" height="4" fill="none" stroke="#444" stroke-width="1"/><path d="M3.500 3.500v-2h4v4h-2" fill="none" stroke="#444" stroke-width="1"/></svg></div><div class="pbtn" style="left:281px;top:6px"><svg class="abs" style="left:0;top:0" width="9" height="9" viewBox="0 0 9 9"><path d="M1.800 1.800l5.400 5.400M7.200 1.800l-5.400 5.400" stroke="#333" stroke-width="1.900"/></svg></div>
<svg class="abs" style="left:8.0px;top:27px;overflow:visible" width="16" height="16" viewBox="0 0 16 16"><path d="M9 9.500l6-7" stroke="#d9605a" stroke-width="2.600" stroke-linecap="round"/><path d="M6.500 8l3.500 3.500-2 2.500q-2 1.500-4.500.500l-1.500-2z" fill="#eda040" stroke="#b9722a" stroke-width=".6"/><path d="M6.500 8l1.500-1.500 3.500 3.500-1.500 1.500z" fill="#f2d04a" stroke="#b9962a" stroke-width=".5"/><rect x="1" y="7.500" width="3" height="3" fill="#5b8cc6" transform="rotate(-20 2.500 9)"/><rect x="2.500" y="10.500" width="3" height="3" fill="#d9534f" transform="rotate(-20 4 12)"/></svg>
<svg class="abs" style="left:33.0px;top:27px;overflow:visible" width="16" height="16" viewBox="0 0 16 16"><rect x="2.500" y="4.500" width="8" height="9" fill="#f7f7f7" stroke="#666" stroke-width=".9"/><rect x="5.500" y="1.500" width="6" height="9" fill="#f7f7f7" stroke="#666" stroke-width=".9"/><path d="M8.500 2v8" stroke="#666" stroke-width=".8"/><circle cx="12" cy="12.500" r="2.800" fill="#7ab86a" stroke="#3f7a33" stroke-width=".7"/><path d="M12 11v3M10.500 12.500h3" stroke="#fff" stroke-width="1"/></svg>
<svg class="abs" style="left:58.0px;top:27px;overflow:visible" width="16" height="16" viewBox="0 0 16 16"><path d="M1 7.500q6.500-6.500 13 0-6.500 6.500-13 0z" fill="#f6f6f6" stroke="#8a8a8a" stroke-width=".9"/><circle cx="7.500" cy="7.500" r="3" fill="#5a86b8" stroke="#2f5b8f" stroke-width=".6"/><circle cx="7.500" cy="7.500" r="1.200" fill="#1f2f45"/><path d="M11.500 13h4l-2 2.500z" fill="#444"/></svg>
<svg class="abs" style="left:83.0px;top:27px;overflow:visible" width="16" height="16" viewBox="0 0 16 16"><g transform="translate(-1,0)"><path d="M1.500 2.500h13l-5 6v6l-3-1.500v-4.500z" fill="#6a9bd2" stroke="#4a78ae" stroke-width=".8"/><rect x="1" y="1" width="14" height="2.800" rx="1.200" fill="#e6d06c" stroke="#bfa640" stroke-width=".6"/></g><path d="M12 13h4l-2 2.500z" fill="#444"/></svg>
<svg class="abs" style="left:109.0px;top:27px;overflow:visible" width="16" height="16" viewBox="0 0 16 16"><text x="5" y="10" font-family="Liberation Serif" font-size="14" fill="#c6c6c6" text-anchor="middle">ε</text><path d="M9 14v-4h4.500v4" fill="none" stroke="#d0d0d0" stroke-width="1.200"/></svg>
<div class="dd dis" style="left:130.500px;top:34px"></div>
<svg class="abs" style="left:145.5px;top:27px;overflow:visible" width="16" height="16" viewBox="0 0 16 16"><path d="M2.500 2v11M2.500 4h3M2.500 8.500h3M2.500 13h3" fill="none" stroke="#999" stroke-width=".8"/><rect x="4" y="2.500" width="3" height="3" fill="#fdeecb" stroke="#dd9a3a" stroke-width=".7"/><rect x="4" y="7" width="3" height="3" fill="#fdeecb" stroke="#dd9a3a" stroke-width=".7"/><rect x="4" y="11.500" width="3" height="3" fill="#fdeecb" stroke="#dd9a3a" stroke-width=".7"/><path d="M10 15l4.500-5h-2.700v-8h-3.600v8h-2.700z" fill="#456f9f" stroke="#2c4f78" stroke-width=".6"/></svg>
<svg class="abs" style="left:170.5px;top:27px;overflow:visible" width="16" height="16" viewBox="0 0 16 16"><path d="M2.500 2v11M2.500 4h3M2.500 8.500h3M2.500 13h3" fill="none" stroke="#999" stroke-width=".8"/><rect x="4" y="2.500" width="3" height="3" fill="#fdeecb" stroke="#dd9a3a" stroke-width=".7"/><rect x="4" y="7" width="3" height="3" fill="#fdeecb" stroke="#dd9a3a" stroke-width=".7"/><rect x="4" y="11.500" width="3" height="3" fill="#fdeecb" stroke="#dd9a3a" stroke-width=".7"/><path d="M10 1l4.500 5h-2.700v8h-3.600v-8h-2.700z" fill="#456f9f" stroke="#2c4f78" stroke-width=".6"/></svg>
<svg class="abs" style="left:194.5px;top:27px;overflow:visible" width="16" height="16" viewBox="0 0 16 16"><rect x="1.500" y="1.500" width="11" height="11" fill="#fafafa" stroke="#666" stroke-width="1"/><rect x="9" y="10.500" width="6.500" height="4" rx="1.300" fill="#d9534a" stroke="#a32a22" stroke-width=".6"/><path d="M10.500 12.500h3.500" stroke="#fff" stroke-width="1"/></svg>
<div class="tree" style="left:0;top:52px;width:294px;height:236px">
<div class="abs" style="left:24px;top:3px;width:13px;height:13px;border:1px solid #bdbdbd;background:#fff"></div><svg class="abs" style="left:25px;top:4px" width="11" height="11" viewBox="0 0 11 11"><path d="M1.800 5.600l2.600 3 4.800-7.200" fill="none" stroke="#000" stroke-width="1.700"/></svg><div class="abs" style="left:43px;top:1px;width:16px;height:16px;background:#39acc6;border:1px solid #2b6f82"></div><div class="abs" style="left:65.3px;top:2px;line-height:15px;font-weight:bold;text-decoration:underline;white-space:nowrap;font-size:11.7px;letter-spacing:-0.215px">Admin_Units</div>
</div>
<div class="abs" style="left:74px;top:204px;width:173px;height:21px;background:#f1f7fc;color:#dde3e8;line-height:21px;padding-left:32px;font-size:11.7px;letter-spacing:-0.067px">Full-screen Snip</div>

</div>
<!-- MAP CANVAS -->
<div id="canvas" class="abs">
<svg id="map" class="abs" style="left:-301px;top:-122px" width="1366" height="768" viewBox="0 0 1366 768">
<g fill="#39acc6" stroke="#12414f" stroke-width="1.15" stroke-linejoin="round">
<path d="M464.4 282.0 L469.2 280.6 L473.6 278.5 L482.4 275.8 L486.8 271.4 L487.6 267.9 L485.0 264.4 L480.6 260.0 L477.1 256.5 L472.7 251.2 L472.7 248.6 L477.1 246.5 L482.4 244.2 L484.1 242.9 L491.2 244.2 L500.0 242.4 L508.7 240.7 L515.8 241.5 L521.9 242.4 L523.7 239.8 L529.8 237.1 L531.6 232.7 L534.2 230.1 L534.2 227.1 L538.6 224.8 L543.9 219.6 L547.4 217.8 L550.6 218.3 L550.9 224.0 L554.5 228.4 L559.7 232.7 L563.3 234.5 L567.6 235.9 L568.5 239.8 L572.0 242.9 L574.7 245.9 L577.3 246.5 L578.2 243.3 L576.4 240.7 L577.3 237.7 L582.6 232.7 L587.9 228.4 L589.6 225.7 L588.2 221.3 L589.1 216.9 L593.1 215.7 L596.7 216.6 L597.5 219.6 L600.2 222.2 L605.5 224.8 L610.7 223.6 L617.8 221.8 L622.2 221.3 L624.8 224.0 L627.4 226.1 L630.1 227.1 L630.9 224.0 L628.3 221.3 L629.2 219.0 L625.7 216.0 L627.4 212.5 L631.8 210.2 L635.3 210.8 L638.9 212.2 L645.0 212.5 L645.9 209.9 L642.4 206.4 L644.1 201.1 L649.4 199.0 L654.7 198.5 L658.2 200.7 L661.7 202.5 L667.0 202.0 L674.0 200.2 L675.8 196.7 L680.2 193.7 L686.3 192.7 L692.7 192.0 L699.8 191.4 L706.8 192.7 L713.8 190.9 L720.9 189.1 L727.0 187.9 L729.7 187.9 L728.8 189.7 L725.3 192.3 L724.4 195.8 L729.7 198.5 L734.1 202.9 L738.5 206.4 L745.5 207.8 L754.3 209.0 L763.1 210.8 L771.9 211.6 L780.7 212.5 L789.5 213.1 L798.2 214.3 L799.6 216.0 L798.2 218.3 L793.0 219.6 L787.7 223.1 L785.1 226.6 L787.7 228.4 L793.0 230.1 L796.1 231.9 L794.7 235.4 L789.5 238.9 L792.1 239.8 L796.1 239.8 L796.5 242.4 L793.8 247.7 L798.2 248.6 L803.5 251.2 L807.9 255.6 L808.8 258.2 L805.3 259.5 L800.9 258.2 L800.0 254.7 L796.5 251.2 L793.0 249.5 L790.3 252.1 L785.9 253.0 L780.7 252.1 L776.3 251.2 L771.9 252.1 L769.2 254.7 L763.1 257.4 L754.3 260.9 L747.3 263.5 L743.7 264.4 L738.5 263.5 L734.9 266.2 L732.3 271.4 L731.4 275.8 L733.2 280.2 L734.9 283.7 L738.5 285.5 L742.9 288.1 L742.0 291.6 L738.5 295.2 L735.8 296.0 L733.2 294.3 L731.4 297.8 L730.5 303.1 L731.4 308.4 L734.1 317.6 L735.8 322.9 L738.5 327.3 L742.9 330.8 L749.0 334.3 L754.3 336.0 L759.6 337.8 L764.8 341.3 L770.1 344.8 L775.4 347.5 L780.7 349.2 L785.9 351.0 L791.2 352.7 L794.7 356.3 L796.5 360.7 L799.1 365.9 L801.8 370.3 L804.4 374.7 L806.2 380.0 L807.9 385.3 L809.7 390.5 L813.2 395.8 L816.7 400.2 L821.1 404.6 L826.4 408.1 L831.6 411.6 L836.9 415.2 L842.2 418.7 L847.5 421.3 L849.5 425.3 L854.7 427.9 L861.8 430.5 L868.8 432.3 L877.6 432.7 L886.4 432.3 L895.2 432.0 L904.0 431.4 L911.0 431.4 L915.4 433.7 L917.1 436.7 L915.9 440.2 L911.9 442.9 L907.5 445.5 L904.0 448.1 L903.6 452.5 L906.6 456.0 L912.7 457.8 L921.5 461.3 L930.3 464.8 L939.1 468.4 L947.9 471.0 L956.7 473.6 L965.5 478.0 L970.8 481.5 L977.8 485.1 L984.8 487.7 L991.9 490.3 L998.9 492.1 L1002.4 493.8 L1005.1 498.2 L1007.7 500.0 L1013.0 502.6 L1018.2 507.0 L1022.6 512.3 L1025.3 516.7 L1026.2 519.3 L1023.5 523.7 L1021.8 529.0 L1020.4 533.4 L1016.5 532.5 L1011.2 530.8 L1005.9 527.3 L1003.3 523.7 L1002.4 520.2 L1000.7 516.7 L998.0 513.2 L994.5 509.7 L990.1 508.8 L983.1 508.8 L976.0 507.9 L970.8 506.2 L966.4 504.4 L965.5 502.3 L962.0 500.9 L957.6 500.9 L954.1 501.8 L950.5 504.4 L947.0 507.9 L943.5 512.3 L940.0 517.6 L937.4 522.0 L937.0 525.5 L933.8 529.9 L931.2 534.3 L933.0 538.7 L936.5 541.3 L942.6 542.2 L947.9 544.0 L953.2 546.6 L958.5 550.1 L959.1 550.0 L962.6 552.3 L960.8 555.8 L962.0 559.9 L960.8 563.4 L962.0 567.5 L964.4 569.9 L963.2 572.2 L960.3 574.9 L956.2 575.2 L951.5 574.0 L948.5 575.2 L943.8 577.5 L939.2 579.9 L935.6 582.8 L933.9 585.7 L933.9 589.2 L934.5 593.3 L935.1 597.4 L932.1 600.4 L928.6 602.7 L924.5 604.5 L920.4 606.8 L917.5 609.7 L915.1 613.3 L914.3 617.4 L912.2 620.3 L908.7 622.1 L902.8 622.6 L897.0 622.1 L892.9 620.3 L890.5 617.4 L889.9 613.8 L890.2 609.7 L891.7 607.4 L895.2 606.2 L898.1 603.3 L900.5 599.8 L902.8 596.3 L904.6 593.3 L902.2 591.0 L899.3 588.6 L901.1 586.9 L905.2 584.5 L910.4 583.4 L915.1 581.6 L918.1 579.3 L916.9 575.8 L914.5 572.2 L912.4 568.1 L911.0 563.4 L909.9 558.8 L908.1 554.1 L905.2 549.4 L902.2 544.7 L903.1 543.1 L899.6 536.9 L897.8 530.8 L896.0 525.5 L893.4 522.0 L889.9 521.1 L884.6 521.6 L879.3 523.7 L874.1 522.9 L868.8 519.3 L863.5 515.8 L859.1 513.2 L856.4 510.6 L858.0 508.3 L859.9 506.3 L859.5 503.6 L857.2 500.5 L854.8 497.0 L852.5 494.2 L850.2 492.3 L847.8 491.9 L844.7 493.0 L841.6 493.8 L838.4 494.6 L835.3 494.2 L832.6 495.4 L829.8 496.6 L828.3 496.2 L829.1 494.6 L831.4 493.4 L833.8 492.3 L835.7 490.7 L834.9 489.5 L832.2 488.0 L829.1 486.0 L826.7 484.5 L824.4 484.5 L821.2 486.0 L818.1 484.8 L815.8 485.2 L815.0 482.5 L814.3 480.7 L810.8 476.3 L807.3 471.9 L802.9 467.5 L798.5 464.8 L793.2 465.7 L789.7 465.4 L784.4 464.0 L779.1 463.1 L773.8 464.0 L770.3 465.4 L767.7 464.8 L764.2 461.3 L759.8 457.8 L754.5 456.0 L748.4 454.3 L744.8 451.6 L741.3 448.1 L735.2 444.6 L729.0 441.1 L724.6 435.8 L719.3 431.4 L713.8 428.4 L708.6 424.8 L705.1 420.4 L700.7 416.0 L696.3 412.5 L691.9 410.4 L685.7 409.9 L680.4 411.1 L676.0 410.8 L675.2 408.7 L678.7 406.4 L676.9 402.9 L673.4 399.3 L668.1 395.8 L662.9 392.3 L659.0 390.5 L657.6 386.5 L654.9 384.4 L650.5 385.3 L647.0 383.5 L647.9 380.9 L649.7 375.6 L647.1 370.3 L643.6 364.2 L640.6 359.8 L637.1 354.5 L637.1 349.2 L635.3 343.1 L631.8 337.8 L626.5 334.3 L621.3 333.4 L616.0 332.5 L612.5 330.8 L607.2 328.1 L601.9 326.0 L596.7 322.9 L591.4 320.2 L586.1 319.0 L580.8 317.2 L573.8 315.8 L566.8 314.9 L561.5 315.5 L556.2 317.6 L550.9 321.1 L545.7 326.0 L540.4 329.0 L538.6 333.4 L535.1 336.0 L531.6 338.7 L522.8 341.8 L514.0 344.0 L507.9 344.3 L505.2 342.2 L506.1 338.7 L510.5 334.3 L514.0 329.9 L513.1 327.3 L507.0 326.7 L500.0 327.8 L492.9 326.7 L487.6 324.6 L482.4 322.0 L479.7 317.6 L477.1 312.3 L475.3 308.4 L477.1 305.3 L480.6 303.1 L482.4 299.6 L477.1 296.0 L470.9 292.5 L469.2 288.1 L466.5 285.5Z"/>
<path d="M740.7 623.7 L741.3 619.8 L744.0 616.5 L747.2 614.5 L751.2 612.5 L752.9 609.5 L754.2 611.2 L755.8 613.8 L759.8 616.5 L764.4 617.8 L767.0 615.2 L769.6 611.2 L772.3 609.2 L775.6 609.2 L779.5 608.2 L782.2 609.5 L784.1 612.1 L787.4 613.8 L790.7 613.2 L792.7 615.8 L796.0 617.8 L800.0 619.5 L804.6 619.1 L809.8 617.8 L815.1 616.9 L820.4 617.1 L825.7 617.8 L832.2 616.5 L838.8 614.8 L845.4 612.5 L850.7 610.5 L856.0 610.3 L862.5 610.8 L867.8 609.9 L871.8 608.6 L871.1 606.6 L873.1 607.6 L877.0 606.6 L882.3 605.0 L886.3 604.2 L889.6 605.3 L888.2 607.2 L886.3 611.2 L883.6 615.8 L879.7 621.1 L875.7 624.4 L871.8 627.0 L870.5 631.6 L868.5 636.9 L865.8 642.2 L863.9 646.8 L866.5 649.4 L869.8 652.0 L871.8 654.0 L871.1 658.0 L873.1 661.3 L875.1 664.6 L872.4 666.5 L869.8 668.5 L867.2 671.8 L865.2 675.8 L866.5 679.1 L867.2 681.0 L863.9 682.4 L860.6 679.7 L856.0 678.4 L850.7 679.7 L845.4 678.4 L840.8 676.4 L836.9 675.1 L834.2 671.8 L831.6 668.5 L829.6 665.2 L825.7 663.3 L820.4 661.3 L815.8 660.6 L811.2 661.3 L806.5 660.0 L801.9 658.0 L797.3 655.3 L792.7 652.7 L788.1 650.1 L783.5 647.4 L779.5 644.8 L774.9 642.2 L771.0 640.2 L766.4 638.2 L762.4 638.9 L758.4 638.5 L753.2 639.3 L749.9 638.9 L746.6 636.9 L743.3 634.3 L741.1 631.6 L740.7 627.7Z"/>
<path d="M542.8 470.8 L544.6 472.6 L542.8 474.3 L540.7 477.0 L539.7 480.5 L541.1 483.1 L546.4 484.0 L551.6 484.5 L555.1 483.1 L559.5 481.4 L563.9 480.1 L568.3 478.7 L570.1 476.1 L574.5 472.6 L578.9 469.9 L583.3 467.3 L585.0 464.7 L587.6 464.1 L590.3 465.5 L592.0 462.9 L593.8 462.0 L595.5 464.7 L598.2 467.3 L600.8 469.1 L602.6 471.7 L605.2 472.6 L604.3 475.2 L607.0 477.0 L609.6 478.7 L611.4 481.4 L609.6 483.1 L607.8 484.9 L609.6 487.5 L611.4 491.0 L614.0 495.4 L615.8 498.9 L614.0 502.4 L611.4 506.0 L607.8 509.5 L605.7 513.0 L607.0 516.5 L609.6 520.0 L610.5 523.5 L608.7 528.8 L607.8 534.1 L607.5 539.3 L607.0 544.6 L606.1 549.9 L605.7 555.1 L604.3 560.4 L602.6 564.8 L599.9 565.7 L596.4 563.9 L592.0 562.2 L587.6 561.3 L583.3 562.2 L579.7 560.4 L577.1 562.2 L578.0 565.7 L576.2 569.2 L572.7 572.7 L569.2 575.4 L565.7 576.2 L562.2 575.4 L559.5 576.2 L557.8 574.5 L556.9 571.8 L554.3 570.1 L551.6 567.4 L549.9 563.9 L547.2 560.4 L548.1 556.9 L546.4 553.4 L548.1 549.9 L549.9 546.4 L549.0 542.0 L550.7 537.6 L550.2 534.1 L552.5 530.5 L553.4 527.9 L549.9 526.2 L548.1 522.6 L550.7 520.0 L549.9 514.7 L550.7 510.3 L549.0 506.8 L547.2 505.1 L548.1 502.4 L545.5 498.9 L542.0 496.3 L537.6 494.5 L535.8 492.8 L536.7 489.3 L535.5 487.5 L537.6 484.9 L539.7 482.2 L538.4 478.7 L539.0 475.2 L541.1 471.7Z"/>
<path d="M628.3 391.4 L631.8 390.5 L637.1 390.5 L640.6 389.3 L643.3 387.9 L644.5 388.8 L643.8 392.3 L644.5 394.9 L640.6 394.9 L637.1 393.5 L632.7 394.6 L629.2 394.1Z"/>
<path d="M806.0 488.9 L807.6 487.7 L810.4 488.0 L811.8 489.5 L810.4 490.7 L807.3 490.9Z"/>
<path d="M539.0 563.6 L541.4 561.8 L543.7 563.1 L543.2 565.7 L540.7 566.0Z"/>
<path d="M544.9 567.4 L547.8 565.7 L550.7 567.4 L550.2 571.0 L547.8 572.4 L545.7 570.6Z"/>
<path d="M713.5 673.5 L716.0 672.3 L719.5 673.5 L721.5 676.0 L720.5 678.3 L717.5 678.5 L714.5 676.5Z"/>
</g>
<g fill="#245669" stroke="#12414f" stroke-width=".8"><circle cx="618.6" cy="361.2" r="0.6"/><circle cx="614.8" cy="380.0" r="0.9"/><circle cx="627.1" cy="400.7" r="0.7"/><circle cx="638.0" cy="413.1" r="0.7"/><circle cx="666.1" cy="411.6" r="0.9"/><circle cx="675.8" cy="416.9" r="0.6"/><circle cx="649.4" cy="387.9" r="0.6"/><circle cx="665.2" cy="401.5" r="0.6"/><circle cx="615.6" cy="332.2" r="0.6"/><circle cx="676.0" cy="416.9" r="0.6"/><circle cx="665.5" cy="401.1" r="0.6"/><circle cx="758.9" cy="479.3" r="0.6"/><circle cx="763.6" cy="480.3" r="0.9"/><circle cx="767.7" cy="477.7" r="0.6"/><circle cx="786.2" cy="486.3" r="0.7"/><circle cx="823.6" cy="497.5" r="0.9"/><circle cx="884.1" cy="422.6" r="0.9"/><circle cx="813.9" cy="487.3" r="0.6"/><circle cx="816.0" cy="486.5" r="0.6"/><circle cx="1000.1" cy="521.1" r="0.6"/><circle cx="962.5" cy="502.1" r="0.6"/><circle cx="968.1" cy="500.5" r="0.6"/><circle cx="773.8" cy="584.8" r="0.7"/><circle cx="829.8" cy="592.4" r="0.6"/><circle cx="839.4" cy="591.2" r="0.7"/><circle cx="852.6" cy="591.5" r="1.1"/><circle cx="857.4" cy="595.4" r="1.2"/><circle cx="859.1" cy="600.1" r="0.9"/><circle cx="863.5" cy="587.5" r="0.6"/><circle cx="865.3" cy="586.6" r="0.6"/><circle cx="870.5" cy="580.4" r="0.7"/><circle cx="720.7" cy="619.6" r="0.7"/><circle cx="732.5" cy="621.2" r="0.9"/><circle cx="734.3" cy="619.1" r="0.6"/><circle cx="737.8" cy="618.8" r="0.6"/><circle cx="543.2" cy="524.0" r="0.6"/></g>
<g fill="#12414f"><circle cx="906.1" cy="493.8" r="0.8"/><circle cx="739.6" cy="432.8" r="0.5"/></g>
<g fill="#fff" stroke="#12414f" stroke-width=".5"><circle cx="739.9" cy="337.3" r="1.2"/></g>
<g fill="#fff" stroke="#12414f" stroke-width=".7" stroke-linejoin="round"><path d="M730.7 267.1 L732.6 265.7 L733.5 268.3 L732.7 272.4 L732.0 275.9 L730.2 276.6 L729.8 272.9 L730.1 269.4Z"/><path d="M740.2 263.0 L741.3 261.6 L742.9 261.3 L743.6 262.5 L742.2 263.7 L740.8 263.9Z"/><path d="M770.8 253.3 L772.0 252.0 L774.3 251.7 L775.7 252.4 L774.5 253.5 L772.2 253.7Z"/><path d="M776.0 252.7 L776.9 251.7 L777.8 252.4 L777.0 253.3Z"/></g>
<g fill="none" stroke="#12414f" stroke-width="1.5" stroke-linejoin="round" stroke-linecap="round"><path d="M734.2 266.7 L735.2 265.1 L736.6 265.6 L737.3 263.9 L738.9 264.4 L739.6 262.8 L741.3 263.2 L743.6 261.8 L745.2 262.5 L745.9 260.9 L747.4 261.6 L748.3 260.2"/><path d="M728.8 275.9 L728.1 273.5 L729.1 271.2 L728.1 269.1 L729.5 267.4 L730.7 265.8"/><path d="M732.8 277.1 L731.6 278.9 L733.1 280.6 L732.4 282.7"/><path d="M777.4 251.5 L779.2 252.4 L780.9 251.7 L782.5 252.9 L784.6 253.1 L786.7 253.6 L789.1 252.7 L791.0 251.7"/><path d="M737.8 285.5 L739.5 286.5 L740.6 285.1 L742.0 287.3 L743.0 288.7 L741.6 290.1 L742.7 291.5 L740.9 292.5 L739.5 294.3 L737.8 295.3 L736.4 296.0"/></g>
<g fill="none" stroke="#12414f" stroke-width="1.15" stroke-linejoin="round" stroke-linecap="round">
<path d="M487.1 264.3 L492.3 262.5 L498.2 260.8 L504.1 259.3 L508.7 259.2 L513.4 260.2 L518.1 259.6 L523.8 258.4M522.2 242.6 L522.8 247.3 L524.6 252.5 L523.8 258.4 L526.3 262.7 L530.1 266.6 L527.7 271.3 L527.3 274.2 L529.8 277.5 L535.7 279.2M522.2 242.6 L527.5 243.2 L533.4 242.2 L538.1 242.6 L542.2 245.9 L545.3 249.0 L546.3 252.5M524.6 252.5 L530.4 251.7 L536.3 251.0 L540.2 253.4 L543.3 256.4 L542.4 260.2 L539.5 263.7 L535.7 266.3 L532.8 268.0 L530.1 266.6M546.3 252.5 L543.3 256.4M546.3 252.5 L547.2 256.6 L547.7 261.3 L548.8 265.4 L551.5 269.3 L553.9 273.1 L554.7 277.2 L549.8 277.7 L543.9 278.3 L538.1 278.9 L535.7 279.2M545.3 249.0 L549.8 246.3 L553.3 247.9 L556.2 246.5 L559.2 242.6 L562.4 238.5 L563.3 235.0 L564.4 234.1M556.2 246.5 L557.0 251.4 L559.7 255.2 L562.1 259.0 L564.4 263.7 L566.8 267.8 L563.3 270.1 L560.3 272.5 L557.0 271.3 L553.9 273.1M562.1 259.0 L568.5 258.2 L573.2 256.4 L578.5 257.8 L584.9 259.0 L590.8 260.2 L596.7 259.0 L600.2 257.8M572.6 254.3 L575.6 256.6 L578.5 257.8 L580.2 256.1 L584.9 254.3 L587.3 251.4 L589.6 247.3 L590.8 242.6 L588.5 237.9 L589.6 233.8 L592.0 232.0 L595.5 229.7M596.7 233.2 L599.6 237.9 L600.2 242.6 L598.4 248.4 L597.8 253.1 L600.2 257.8 L600.8 260.2 L598.4 263.7 L595.5 267.2 L592.0 271.3M595.5 229.7 L596.7 233.2M599.6 237.9 L606.0 236.7 L611.9 236.1 L616.0 236.7M566.8 267.8 L573.2 271.9 L576.7 272.5 L582.6 271.9 L588.5 271.7 L592.0 271.3 L592.6 274.2 L595.5 277.7 L600.2 281.3 L596.7 283.6 L592.0 288.3 L589.6 291.8 L592.6 294.2 L590.8 297.7 L589.0 301.2 L585.5 300.0M554.7 277.2 L556.8 281.3 L560.3 284.8 L565.0 284.2 L569.7 284.5 L573.2 288.3 L577.9 293.0 L582.0 296.5 L585.5 300.0 L584.9 304.7 L589.6 305.9 L594.3 307.1 L599.0 308.2 L600.2 305.9 L604.9 303.5 L610.7 301.2 L616.0 298.8M584.9 304.7 L580.2 305.9 L575.6 302.9 L572.0 303.8 L569.1 307.1 L565.6 309.6 L560.9 307.6 L557.4 307.3 L555.6 309.6 L548.6 310.3 L542.2 308.0M599.0 308.2 L598.4 311.7 L596.7 315.0M557.4 307.3 L559.7 311.7 L559.2 315.0M535.7 279.2 L533.9 281.8 L538.1 284.8 L542.2 283.4 L545.7 286.0 L546.8 290.6 L548.6 294.4 L552.4 296.5 L549.8 300.0 L545.7 301.2 L544.5 304.9 L542.2 308.0 L541.3 309.6M535.7 279.2 L528.9 281.3 L525.2 283.0 L524.0 287.1 L525.2 291.8 L524.0 294.7M524.0 294.7 L519.3 295.3 L512.3 296.0 L505.2 297.7 L498.2 297.1 L491.2 298.4 L485.3 300.0 L482.7 300.0M524.0 294.7 L528.7 295.3 L533.4 296.5 L538.1 298.4 L540.6 301.2 L539.8 305.9 L541.3 309.6 L540.4 315.0M645.1 212.8 L649.2 216.3 L652.7 218.1 L657.4 216.9 L662.1 218.1 L666.8 217.3 L671.5 216.3 L673.8 214.6 L677.4 215.2 L680.9 216.3 L681.5 220.4 L679.7 224.5 L678.5 226.9 L680.9 228.3 L684.4 226.9 L689.1 226.3 L693.8 223.4 L697.3 221.6 L699.6 218.7 L702.0 216.3 L706.7 215.2 L711.4 214.6 L716.0 212.8 L719.6 210.5 L722.5 208.1 L726.6 209.3 L732.5 208.7 L738.9 207.2M600.0 237.4 L605.9 236.8 L611.7 236.3 L617.6 236.0 L623.4 236.0 L628.1 235.1 L631.1 236.3 L631.6 232.7 L635.2 230.4 L639.9 226.9 L644.5 224.0 L649.2 222.2 L652.2 220.4 L652.7 218.1M629.9 228.1 L630.7 229.8 L631.4 232.7M631.1 236.3 L634.0 238.0 L631.1 241.0 L628.7 243.9 L627.5 247.4 L625.8 251.5 L621.7 255.0 L617.6 256.8 L615.8 259.7 L617.6 264.4 L618.2 270.0M652.2 220.4 L651.0 224.5 L650.4 229.2 L648.6 233.3 L646.3 237.4 L645.7 241.0 L646.9 244.5 L648.1 248.0 L651.6 249.2 L656.3 248.0 L661.0 247.4 L663.9 249.2 L665.1 252.1 L668.0 253.8 L672.7 253.6 L677.4 253.3M663.9 249.2 L661.0 251.5 L657.4 255.0 L654.5 258.5 L653.3 262.1 L653.9 266.7 L656.8 267.3 L657.4 270.0M645.1 267.3 L649.2 266.7 L653.9 266.7M677.4 253.3 L678.5 249.2 L680.9 245.6 L684.4 242.7 L689.1 240.4 L693.8 238.6 L698.5 239.2 L702.6 240.4 L705.5 243.3 L708.4 245.1M677.4 253.3 L680.9 257.4 L683.8 261.5 L686.2 265.6 L687.3 270.0M706.7 215.2 L711.4 216.3 L710.2 219.9 L709.0 223.4 L712.5 226.3 L715.5 229.8 L714.3 232.7 L710.2 233.9 L705.5 235.1 L703.2 237.4 L702.6 240.4M708.4 245.1 L712.5 243.9 L717.2 241.5 L723.1 239.8 L728.9 238.0 L733.6 236.3 L736.6 235.7 L738.9 237.4 L741.2 235.1 L740.1 231.6 L737.1 229.2 L734.2 226.9 L737.1 224.0 L741.8 220.4 L746.5 216.3 L751.2 213.4 L753.6 211.1 L752.4 209.0M741.8 220.4 L746.5 222.8 L752.4 223.6 L757.1 222.8 L760.0 222.2M738.9 237.4 L740.1 242.1 L743.6 245.6 L747.1 248.0 L750.0 249.2 L749.5 252.7 L745.3 254.4 L740.7 256.2 L738.3 257.4M750.0 249.2 L753.6 246.8 L757.1 246.2 L760.0 246.8M708.4 245.1 L706.7 248.0 L709.0 251.5 L709.6 253.8 L705.5 254.4 L702.0 256.2 L702.6 260.9 L704.9 263.2 L703.2 266.2 L700.8 270.0M709.6 253.8 L712.5 256.8 L717.2 257.9 L721.9 257.4 L725.4 258.5 L728.9 260.9 L733.6 259.7 L738.3 257.4M721.9 257.4 L718.4 260.9 L717.2 265.6 L718.4 270.0M760.0 222.2 L763.3 223.1 L764.2 226.6 L763.3 230.2 L762.1 234.9 L761.0 239.5 L761.5 243.1 L763.3 246.0 L765.1 248.9 L766.8 252.4 L768.9 255.0M750.1 249.2 L753.6 246.8 L757.1 246.2 L760.0 246.8 L763.3 246.0M738.3 257.4 L740.4 259.7 L743.6 262.0M789.7 239.0 L786.7 241.3 L785.3 244.8 L785.0 248.3 L786.5 251.3 L787.3 253.4M718.4 270.0 L720.5 271.2 L724.6 272.4 L726.4 274.7 L725.2 277.1 L721.1 277.6 L717.6 278.2 L714.1 279.4 L709.4 280.6 L704.7 281.7 L700.0 282.3M725.2 277.1 L729.3 278.2 L732.8 278.5M717.6 278.2 L719.9 281.2 L723.4 282.9 L728.1 282.3 L732.2 281.2M617.6 265.0 L619.3 269.7 L623.4 272.0 L629.3 274.4 L635.2 275.5 L638.7 276.1 L640.4 277.9 L642.8 279.7 L641.6 281.4 L644.5 282.6 L644.0 284.3 L646.9 284.9 L646.3 286.7 L649.2 286.1 L650.4 287.9 L648.6 288.4M638.7 276.1 L642.2 273.2 L645.1 269.7 L646.3 267.3 L651.6 267.9 L655.1 266.8 L653.9 265.0M655.1 266.8 L657.4 270.9 L661.0 273.2 L665.6 276.1 L670.3 279.1 L675.0 281.4 L680.9 282.6 L686.7 283.2 L690.8 282.6 L691.4 279.1 L690.3 275.0 L692.6 273.8 L697.3 273.8 L699.6 270.9 L702.0 267.3 L703.7 265.0M686.2 265.0 L687.9 269.7 L691.4 272.0 L692.6 273.8M690.8 282.6 L693.8 281.4 L699.6 280.8 L705.5 280.2 L711.4 279.7 L717.2 277.9 L721.9 277.3 L726.6 276.7 L730.1 275.5M717.2 277.9 L718.4 280.2 L721.9 282.6 L726.0 281.4 L730.1 280.2 L733.3 279.7M717.2 265.0 L717.8 269.1 L720.7 271.4 L724.8 272.6 L729.5 272.0M648.6 288.4 L652.7 289.0 L657.4 287.9 L661.0 289.0 L665.1 290.2 L670.3 289.4 L676.2 289.0 L682.1 289.4 L686.2 292.5 L687.3 293.7 L684.4 296.1 L683.8 299.0 L686.7 298.4 L691.4 299.0 L696.1 300.8 L700.8 302.5 L705.5 303.7 L707.8 305.4 L709.0 307.2M680.9 282.6 L684.4 286.1 L689.1 288.4 L693.8 290.2 L699.6 291.4 L705.5 289.0 L711.4 287.9 L717.2 287.3 L721.9 287.9 L726.6 289.6 L731.3 290.2 L733.6 293.1 L733.0 296.1M709.0 307.2 L712.5 306.6 L717.2 305.4 L721.9 307.2 L726.6 306.0 L730.1 304.3M709.0 307.2 L707.3 310.7 L708.4 314.2 L709.0 316.6 L706.1 319.5 L702.0 321.8 L698.5 323.6 L696.1 326.0M600.0 269.7 L603.5 270.3 L607.0 272.6 L611.7 275.5 L615.2 278.5 L618.8 280.2 L622.9 282.6 L625.2 285.5 L624.0 290.8 L621.1 294.3 L616.4 297.8 L611.7 300.8 L607.0 303.1 L602.3 305.4 L600.0 307.2M625.2 285.5 L629.3 285.9 L635.2 286.7 L641.0 287.9 L645.7 289.6 L648.6 288.4M645.7 289.6 L645.1 294.3 L644.0 299.0 L643.4 303.7 L641.0 308.4 L637.5 311.9 L634.0 314.2 L630.5 316.6 L628.1 317.2M665.1 290.2 L663.3 294.3 L662.1 299.0 L661.0 303.7 L659.2 308.4 L656.3 311.9 L652.7 315.4 L649.2 318.3 L646.9 321.3 L646.3 323.0M687.3 293.7 L682.1 296.1 L677.9 297.2 L676.2 300.2 L675.6 304.9 L673.3 309.5 L671.5 314.2 L669.2 318.9 L665.6 322.4 L662.7 325.4 L663.3 328.3M696.1 326.0 L691.4 323.6 L686.7 324.8 L682.1 327.1 L676.2 328.9 L671.5 328.9 L668.0 330.1 L663.3 328.3 L658.6 327.1 L653.9 327.7M600.0 313.1 L604.7 314.2 L609.4 316.6 L612.9 313.1 L617.6 311.3 L622.3 312.5 L625.2 316.0 L628.1 317.2 L631.6 318.9 L635.2 321.3 L632.8 324.8 L632.2 328.3 L634.0 331.8 L632.2 335.9M609.4 316.6 L612.9 320.1 L616.4 323.6 L619.3 326.0 L623.4 328.9 L626.4 330.1M635.2 321.3 L641.0 322.4 L646.3 323.0 L649.2 326.0 L653.9 327.7 L657.4 330.6 L656.3 335.3 L654.5 338.8 L656.3 342.4 L661.0 343.5 L665.6 343.3 L670.3 342.4 L671.5 337.7 L672.7 333.0 L671.5 328.9M656.3 342.4 L651.6 345.9 L646.9 344.7 L642.2 342.9 L636.3 342.4M670.3 342.4 L673.8 345.9 L677.4 342.4 L679.7 337.7 L680.9 333.0 L682.1 328.9 L682.1 327.1M661.0 343.5 L663.9 347.1 L666.8 349.4 L663.9 351.7 L663.3 355.0M638.7 355.0 L642.2 352.3 L646.3 351.7 L646.9 355.0M696.1 326.0 L700.2 328.3 L704.3 328.9 L703.2 333.0 L702.0 335.3 L704.3 338.8 L705.5 340.6M704.3 328.9 L707.8 326.0 L712.5 324.8 L716.0 322.4 L719.6 318.9 L724.2 321.3 L728.9 323.0 L733.6 323.6 L736.0 323.0M705.5 340.6 L710.2 342.4 L714.9 344.7 L719.6 345.9 L723.1 344.7 L725.4 341.2 L728.9 338.3 L733.6 336.5 L736.6 334.2 L738.3 330.6 L739.5 328.3M705.5 340.6 L702.0 344.7 L699.6 348.2 L697.3 351.7 L693.8 355.0M723.1 344.7 L727.8 345.3 L732.5 347.1 L734.8 349.4 L731.3 351.7 L727.8 352.3 L726.6 355.0M740.7 328.9 L742.4 333.0 L744.8 336.5 L746.5 340.0 L749.5 341.8 L751.8 340.0 L752.4 336.7M636.4 355.0 L641.1 353.2 L645.2 352.0 L646.4 356.7 L647.5 361.4 L649.3 366.1 L654.0 368.4 L655.8 372.5 L657.5 375.5 L660.4 374.3 L664.5 373.7 L668.1 373.1 L670.4 370.8 L671.0 367.3 L669.2 363.8 L668.6 360.2 L669.2 357.3 L665.7 359.1 L663.4 355.5 L664.0 352.0 L666.9 350.3 L665.1 347.3 L662.2 345.0M657.5 375.5 L660.4 378.4 L658.7 382.5 L656.3 384.3M669.2 357.3 L672.7 356.1 L676.3 357.3 L679.8 357.9 L683.3 356.7 L687.4 356.1 L690.3 355.5 L693.8 353.2 L697.4 350.9 L699.1 347.9 L698.5 345.0M670.4 373.1 L673.9 376.1 L678.6 377.2 L683.3 377.2 L686.8 379.0 L688.0 382.5 L692.7 383.1 L697.4 383.1 L700.3 384.9 L701.5 388.4 L704.4 390.7 L707.9 391.3 L709.7 390.1 L713.8 389.0 L716.7 386.6M690.3 355.5 L693.3 359.1 L696.2 362.6 L699.7 365.5 L703.2 367.9 L707.3 370.2 L711.4 372.5 L714.9 373.7 L718.5 372.0 L722.6 369.6 L726.1 367.9 L728.4 366.7 L724.9 366.1 L723.2 362.6 L719.6 361.4 L720.8 357.9 L723.7 356.1 L726.1 353.2 L729.0 352.0 L731.9 349.7 L734.3 347.9 L732.5 345.0M714.9 373.7 L715.5 377.2 L714.9 380.8 L716.7 383.7 L716.7 386.6M716.7 386.6 L722.0 384.6 L727.8 384.3 L732.5 385.8 L733.5 390.1 L735.5 393.6 L739.0 396.3 L743.1 394.8 L746.6 394.0 L750.1 396.6 L752.5 399.5 L756.0 398.3 L759.5 397.7 L760.7 400.1 L758.3 403.0 L754.8 404.8 L751.3 407.1 L747.8 408.9 L744.2 410.6 L741.9 411.2M709.7 390.1 L710.3 394.2 L708.5 397.7 L704.4 400.1 L700.3 402.4 L697.9 406.0 L695.0 408.9 L692.7 410.6M713.8 389.0 L714.9 393.1 L718.5 396.0 L723.2 397.7 L727.3 398.3 L729.6 401.8 L732.5 404.8 L736.0 406.5 L738.4 408.9 L741.9 411.2 L740.7 415.3 L738.4 418.8 L736.0 420.6 L732.5 420.0 L727.8 421.2 L723.2 420.6 L719.0 420.0 L714.9 418.3 L712.6 419.4 L709.7 421.2 L707.3 422.9M741.9 411.2 L741.9 414.2 L745.4 415.3 L748.9 418.8 L753.6 421.2 L758.3 420.0 L763.0 422.4 L766.5 423.5 L766.5 427.1 L770.0 429.4 L774.7 430.6 L780.0 431.7M760.7 400.1 L765.3 399.5 L771.2 397.7 L775.9 395.4 L777.7 391.9 L775.9 389.5 L772.4 387.2 L766.5 384.9 L763.0 382.5 L760.7 377.8 L759.5 373.1 L757.1 368.4 L754.8 364.3 L753.6 360.2M734.3 347.9 L735.5 352.0 L738.4 354.4 L743.1 356.7 L747.8 359.1 L751.3 360.8 L753.6 360.2 L758.3 357.3 L763.0 353.2 L766.5 349.7 L771.2 346.8 L773.6 345.0M754.8 364.3 L760.1 369.0 L763.0 367.3 L766.5 363.8 L771.2 361.4 L775.9 360.2 L780.0 359.7M777.7 391.9 L780.0 391.3M775.9 389.5 L777.1 384.9 L780.0 382.5M780.0 359.7 L781.6 361.6 L785.1 361.1 L789.2 360.2 L792.7 359.9 L795.3 359.3M775.9 389.5 L777.5 386.3 L776.6 383.3 L780.4 381.6 L784.5 381.0 L786.3 378.1 L786.9 375.1 L789.2 372.8 L793.3 370.4 L797.4 368.7 L799.8 367.3M784.5 381.0 L788.1 381.6 L792.7 380.4 L797.4 379.2 L802.1 378.1 L805.3 377.5M777.6 391.9 L779.9 393.9 L783.4 397.4 L785.1 395.6 L788.1 392.7 L791.6 391.0 L796.3 389.8 L801.0 388.6 L805.6 387.4 L808.6 386.3M783.4 397.4 L784.5 400.9 L786.9 403.8 L790.4 406.2 L795.1 407.4 L799.8 407.9 L802.7 408.5 L805.6 406.2 L810.3 403.8 L815.0 403.3 L817.9 403.3M802.7 408.5 L804.5 412.1 L805.1 416.2 L803.9 420.0M822.1 407.9 L818.5 410.9 L816.8 414.4 L817.9 417.9 L818.5 420.0M779.9 431.8 L782.6 434.0 L784.4 436.3 L789.1 438.1 L793.8 439.9 L797.3 438.1 L800.8 439.3 L805.5 441.0 L810.2 442.8 L813.1 444.5 L813.7 448.1 L812.5 451.6 L810.2 454.5 L807.3 456.3 L806.1 459.8 L803.2 462.1 L798.5 461.0 L794.9 460.4 L792.6 457.4 L789.1 455.7 L785.6 456.3 L782.1 455.1 L779.7 452.2 L776.2 450.4 L773.8 446.9 L770.3 444.0 L767.4 441.0 L765.9 438.7 L769.2 436.3 L773.8 435.2 L777.9 433.4 L779.9 431.8M772.7 448.1 L769.2 449.2 L765.6 446.9 L763.3 443.4 L759.8 442.8 L756.3 445.7 L752.7 448.1 L749.2 445.1 L745.7 446.3 L744.3 448.1 L746.9 451.6 L751.6 454.9M783.3 397.4 L780.9 399.4 L776.2 400.4 L772.9 402.9 L772.9 407.0 L774.8 410.5 L777.4 414.1 L780.9 417.6 L782.6 420.5 L779.7 422.3 L775.0 421.7 L770.3 421.1 L767.0 423.4M803.9 420.0 L804.9 422.0 L809.0 423.4 L813.7 425.2 L817.2 426.0M818.5 420.0 L817.2 426.0 L817.8 430.5 L819.6 433.4 L822.5 434.6M822.5 434.6 L819.6 437.5 L817.2 440.4 L813.1 443.4 L813.1 444.5M822.5 434.6 L826.6 433.4 L831.3 435.2 L834.8 438.1 L836.6 440.4 L840.7 436.3 L845.3 431.6 L849.5 426.4M836.6 440.4 L836.0 444.5 L833.6 446.9 L834.8 450.4 L832.5 453.9 L833.6 457.4M812.5 451.6 L816.0 455.1 L819.6 453.3 L824.2 452.7 L828.9 453.9 L832.5 453.9M806.1 459.8 L807.3 463.3 L805.5 466.8 L805.1 468.6M833.6 457.4 L835.4 459.8 L833.6 463.9 L833.0 468.0 L831.3 470.3 L834.8 473.3 L839.5 475.0 L840.7 477.4M840.7 477.4 L836.0 476.8 L831.3 476.2 L826.6 476.8 L821.9 477.9 L817.2 478.5 L814.3 479.5M833.6 457.4 L838.3 458.0 L844.2 456.8 L850.0 455.1 L855.9 453.9 L860.0 453.3M839.5 475.0 L845.3 474.4 L850.0 473.8 L854.7 472.1 L860.0 470.9M840.7 477.4 L841.8 480.9 L840.7 484.4 L838.3 487.3 L836.6 490.0M841.8 480.9 L846.5 483.2 L852.4 485.0 L860.0 486.2M860.0 446.3 L857.7 446.9 L857.1 449.8 L858.2 452.2 L860.0 452.5M867.5 432.3 L865.8 436.4 L865.2 440.5 L866.9 442.9 L862.8 445.2 L858.7 447.0 L857.5 449.9 L860.5 452.8 L864.0 455.2 L864.6 458.7 L866.3 461.6 L869.9 462.8 L872.8 464.5 L871.6 467.5 L871.0 469.2 L874.5 471.0 L879.2 472.2 L883.9 472.7 L887.4 473.3M860.0 470.9 L859.3 466.9 L859.9 464.0 L862.8 463.4 L866.3 461.6M860.0 486.1 L864.0 488.0 L868.7 490.0 L871.0 489.2 L872.8 486.2 L876.9 483.9 L881.6 482.1 L885.1 480.4 L887.4 477.4 L887.4 473.3M836.6 490.0 L837.0 492.7 L837.3 494.5M887.4 473.3 L892.1 472.2 L896.8 471.6 L901.5 470.4 L902.7 470.4 L906.2 468.1 L908.5 465.7 L907.9 462.2 L907.4 458.7 L906.2 455.2M902.7 470.4 L905.0 473.3 L907.4 476.3 L907.9 478.6 L912.1 479.8 L915.6 481.0 L917.9 480.4 L920.3 477.4 L922.0 473.9 L923.8 470.4 L926.1 468.1 L929.6 467.5 L933.2 466.3M917.9 480.4 L918.5 483.9 L914.4 486.2 L912.6 489.2 L912.1 492.7 L910.9 496.2 L912.1 500.3 L913.8 504.4 L915.6 507.9 L916.2 510.0M918.5 483.9 L922.6 486.8 L926.1 489.2 L929.6 488.0 L934.3 487.4 L939.0 488.0 L941.4 489.7 L946.0 489.2 L951.9 488.6 L957.8 488.0 L962.5 487.4 L967.1 486.2 L970.7 485.6 L972.4 483.9 L973.6 481.8M970.7 485.9 L974.2 490.3 L976.5 495.0 L978.9 499.7 L982.4 502.1 L987.1 502.6 L990.0 503.2M941.4 489.7 L941.9 493.8 L941.4 497.9 L944.3 501.5 L947.2 504.4 L947.8 505.8M878.1 483.9 L879.2 488.0 L882.2 491.5 L884.5 495.0 L886.3 498.5 L888.6 502.1 L892.1 505.6 L895.6 509.1 L896.8 510.0M896.8 510.0 L898.1 511.3 L896.4 514.3 L894.0 517.1 L891.7 520.6 L891.1 521.6M916.2 510.0 L918.3 511.3 L921.6 510.7 L924.5 509.3 L925.1 512.8 L926.0 516.3 L926.5 517.8M896.7 526.3 L899.3 524.2 L905.2 523.3 L908.7 525.1 L910.1 528.0 L913.4 528.0 L918.1 527.4 L921.6 526.8 L924.5 527.4 L924.2 525.1 L926.5 521.6 L926.5 517.8 L931.0 517.5 L935.6 517.5 L938.9 517.6M990.0 503.2 L992.8 505.2 L992.1 509.5M992.8 505.2 L996.6 503.4 L1001.3 501.6 L1006.2 499.9M956.2 548.5 L953.8 551.5 L950.9 553.2 L946.2 554.4 L942.7 555.6 L941.5 557.9 L942.7 560.0M942.7 560.0 L942.9 561.7 L939.2 562.3 L937.0 563.1M912.4 568.1 L916.9 567.5 L921.6 566.4 L926.3 567.0 L929.8 568.7 L931.5 565.2 L934.5 563.4 L937.0 563.1M937.0 563.1 L939.2 565.8 L943.8 568.1 L947.9 569.9 L950.3 572.2 L950.9 574.2M918.1 579.3 L922.2 580.4 L924.2 583.4 L924.2 586.9 L926.3 590.4 L929.2 593.9 L934.5 597.2M904.6 593.3 L908.7 592.7 L912.2 592.2 L915.7 593.3 L919.2 595.1 L921.6 597.4 L924.5 598.0 L926.3 596.3 L925.7 593.3 L927.4 591.6M764.4 617.8 L763.1 621.1 L764.4 624.4 L767.7 626.4 L768.3 630.3 L764.4 631.6 L761.1 632.9 L761.7 636.9 L762.4 638.9M768.3 630.3 L772.9 632.9 L776.9 635.3 L780.8 636.2 L782.2 639.5 L784.1 636.9 L784.8 634.9 L790.1 634.5 L795.3 633.6 L800.0 632.7 L803.3 631.6 L805.2 633.6 L803.9 635.6 L805.9 637.6 L809.8 638.2 L812.5 635.6 L814.5 632.3 L816.4 632.9 L815.8 635.6 L819.1 636.2 L823.0 634.5 L825.7 631.6M825.7 617.8 L827.0 621.7 L826.3 626.4 L825.7 631.6M803.9 635.6 L800.0 637.6 L797.3 639.5 L796.9 642.8 L799.3 644.8 L804.6 645.5 L808.5 648.1 L811.8 651.7 L813.1 655.3 L812.5 659.3 L813.8 661.3M819.1 636.2 L819.7 639.5 L818.4 643.5 L816.4 646.8 L817.1 649.4 L821.7 650.7 L827.0 651.4 L830.9 652.0 L832.2 652.7M825.7 631.6 L827.6 628.3 L832.2 626.1 L836.9 625.7 L838.8 624.4 L841.5 626.4 L845.4 627.7 L847.4 628.3M847.4 628.3 L848.7 625.7 L849.4 622.4 L853.3 621.1 L857.3 620.8 L859.9 623.1 L865.2 623.7 L869.8 625.7 L871.8 627.0M847.4 628.3 L849.4 632.9 L852.0 636.9 L851.0 640.8 L846.1 639.5 L840.8 640.8 L836.9 642.8 L840.1 645.1 L843.0 645.5 L839.1 648.1 L835.1 650.3 L832.2 652.7M832.2 652.7 L830.9 655.3 L832.9 658.6 L834.9 661.3 L833.6 663.3 L831.6 664.6 L830.3 665.5M834.9 661.3 L840.1 660.6 L845.4 660.0 L850.7 659.3M863.9 647.0 L858.6 646.8 L854.6 648.1 L851.3 650.7 L852.7 654.0 L850.7 657.3 L850.7 659.3 L852.0 663.3 L854.0 667.2 L856.0 669.8 L855.3 673.8 L857.3 676.4 L860.2 679.5M570.1 476.1 L572.7 479.6 L576.2 483.1 L577.1 487.5 L578.9 491.9 L584.1 494.5 L585.9 498.0 L589.4 498.0 L593.8 495.4 L599.1 492.8 L602.6 489.3 L606.1 485.7 L607.8 484.9M548.1 503.3 L552.5 505.1 L557.8 507.7 L562.2 507.4 L567.4 506.0 L571.0 507.7 L576.2 508.6 L581.5 506.8 L586.8 503.3 L589.4 500.7 L585.9 498.0M557.8 507.7 L560.4 512.1 L565.7 513.9 L572.7 513.9 L576.2 515.6 L577.1 520.9 L575.3 525.3 L574.5 530.5 L572.7 534.9 L568.3 537.6 L563.9 540.2 L557.8 539.3 L553.4 537.6 L550.7 536.7M605.7 513.0 L600.8 515.6 L595.5 518.3 L591.2 521.8 L589.9 527.0 L588.5 532.3 L587.6 535.8 L592.0 538.5 L593.8 541.1 L599.1 542.0 L604.3 543.7 L607.0 544.6M572.7 534.9 L576.2 536.7 L578.9 539.3 L583.3 540.2 L588.5 541.1 L593.8 541.1M578.9 539.3 L578.0 543.7 L576.2 548.1 L572.7 550.8 L567.4 552.5 L563.0 553.4 L557.8 551.3 L553.4 549.0 L548.5 549.9M563.0 553.4 L564.8 558.7 L566.6 563.9 L568.3 568.3 L563.9 569.2 L559.5 571.0 L557.8 574.5M540.4 315.0 L538.2 317.5 L534.2 320.7 L532.1 324.2 L531.0 327.0 L527.4 328.7 L521.6 328.4 L516.3 327.7 L514.0 329.9M531.0 327.0 L529.8 330.4 L528.0 333.4 L531.0 335.1 L534.2 336.5M559.2 315.0 L557.7 316.4M585.0 304.7 L589.6 305.2 L594.2 305.8 L597.8 307.0 L599.5 308.2 L598.7 311.7 L600.0 313.1 L598.9 315.2 L601.3 318.7 L602.5 322.2 L602.2 324.9"/>
</g>

</svg>
</div>
<!-- STATUS BAR -->
<div id="status" class="abs">
<div class="field" style="left:4px;top:4px;width:200px;height:21px;border-color:#adadad"></div><svg class="abs" style="left:10px;top:7px" width="16" height="16" viewBox="0 0 16 16"><circle cx="6" cy="6" r="4.200" fill="none" stroke="#777" stroke-width="1.400"/><path d="M9.200 9.200l4.300 4.300" stroke="#777" stroke-width="1.700"/></svg><div class="lab" style="left:33px;color:#737373;font-size:10.8px;letter-spacing:0.118px">Type to locate (Ctrl+K)</div>
<div class="lab" style="left:584.8px;font-size:10.8px;letter-spacing:-0.109px">Coordinate</div><div class="field" style="left:642px;width:84px;background:#f3f3f3;border-color:#b9b9b9"></div><div class="lab" style="left:651.2px;color:#2e2e2e;font-size:10.8px;letter-spacing:0.401px">40.80°,3.70°</div>
<svg class="abs" style="left:730px;top:6px" width="16" height="17" viewBox="0 0 16 17"><g transform="rotate(-25 8 9)"><rect x="4" y="3.500" width="8" height="12" rx="3.800" fill="#f4f4f4" stroke="#444" stroke-width="1"/><path d="M4 8h8M8 3.500v4.500" stroke="#444" stroke-width=".8"/><circle cx="8" cy="12" r="1.300" fill="none" stroke="#444" stroke-width=".7"/><path d="M5.500 5.500l2 2M9 4.500l-2.500 3" stroke="#444" stroke-width=".6"/></g><path d="M12 4l2.500-2.500M1 10l2 0" stroke="#444" stroke-width=".8" stroke-dasharray="1.500 1"/></svg>
<div class="lab" style="left:758.8px;font-size:10.8px;letter-spacing:-0.67px">Scale</div><div class="field" style="left:787px;width:80px"></div><div class="abs" style="left:846px;top:5px;width:1px;height:19px;background:#c9c9c9"></div><div class="dd" style="left:852px;top:12px"></div><div class="lab" style="left:792px">1:</div><svg class="abs" style="left:800.6px;top:9.6px;overflow:visible" width="44" height="11" viewBox="0 0 44 11"><g fill="none" stroke="#000" stroke-width="1.15" stroke-linecap="round" stroke-linejoin="round" transform="scale(1.0)"><path transform="translate(0.00,0)" d="M5.200 .800q-3.300 .300-3.300 2 0 1.500 2.600 1.700-3.300 .500-3.300 2.500 0 1.700 4.200 1.700"/><path transform="translate(6.00,0)" d="M.800 1.100q2.400 .600 4.300-.200 -.300 4.200.300 8.100"/><path transform="translate(12.00,0)" d="M.600 9q1.800-4.100 2.500-8.300 .700 4.200 2.500 8.300"/><path transform="translate(18.00,0)" d="M.600 .700q1.800 4.100 2.500 8.300 .700-4.200 2.500-8.300"/><path transform="translate(24.00,0)" d="M5.400 .600q.100 2.300-1.600 2.300-1.700 0-1.900-2.100 .300 4.200 1.300 8.200"/><path transform="translate(30.00,0)" d="M5.400 .600q.100 2.300-1.600 2.300-1.700 0-1.900-2.100 .300 4.200 1.300 8.200"/><path transform="translate(36.00,0)" d="M4.800 3.100q0-2.300-1.800-2.300t-1.800 1.900 1.600 1.900 2-1.500q-.200 3 .500 5.900"/></g></svg><svg class="abs" style="left:878px;top:6px" width="14" height="16" viewBox="0 0 14 16"><path d="M3.500 7v-2.500a3.500 3.500 0 0 1 7 0v2.500" fill="none" stroke="#8a8a8a" stroke-width="1.600"/><rect x=".800" y="7" width="12.400" height="8.500" rx="1.500" fill="#6f6f6f"/></svg>
<div class="lab" style="left:899.8px;font-size:10.8px;letter-spacing:-0.261px">Magnifier</div><div class="field" style="left:948px;width:83px"></div><div class="abs" style="left:1016px;top:5px;width:1px;height:19px;background:#c9c9c9"></div><svg class="abs" style="left:1019px;top:8px" width="9" height="13" viewBox="0 0 9 13"><path d="M4.500 .500l3.600 4.300h-7.200zM4.500 12.500l3.600-4.300h-7.200z" fill="#555"/></svg><svg class="abs" style="left:953.0px;top:9.6px;overflow:visible" width="19" height="11" viewBox="0 0 19 11"><g fill="none" stroke="#000" stroke-width="1.15" stroke-linecap="round" stroke-linejoin="round" transform="scale(1.0)"><path transform="translate(0.00,0)" d="M2.500 .700q.600 3.600.900 8.300"/><path transform="translate(5.90,0)" d="M3 4.300l1.300 1.400-1.300 1.400-1.300-1.400z" fill="#000" stroke-width=".5"/><path transform="translate(11.80,0)" d="M3 4.300l1.300 1.400-1.300 1.400-1.300-1.400z" fill="#000" stroke-width=".5"/></g></svg><div class="lab" style="left:970.500px">%</div>
<div class="lab" style="left:1039.7px;font-size:10.8px;letter-spacing:0.05px">Rotation</div><div class="field" style="left:1090px;width:83px"></div><div class="abs" style="left:1159px;top:5px;width:1px;height:19px;background:#c9c9c9"></div><svg class="abs" style="left:1162px;top:8px" width="9" height="13" viewBox="0 0 9 13"><path d="M4.500 .500l3.600 4.300h-7.200zM4.500 12.500l3.600-4.300h-7.200z" fill="#555"/></svg><svg class="abs" style="left:1096.0px;top:9.6px;overflow:visible" width="19" height="11" viewBox="0 0 19 11"><g fill="none" stroke="#000" stroke-width="1.15" stroke-linecap="round" stroke-linejoin="round" transform="scale(1.0)"><path transform="translate(0.00,0)" d="M3 4.300l1.300 1.400-1.300 1.400-1.300-1.400z" fill="#000" stroke-width=".5"/><path transform="translate(5.90,0)" d="M1.800 6.500q.500 1-.600 2.300" /><path transform="translate(9.10,0)" d="M3 4.300l1.300 1.400-1.300 1.400-1.300-1.400z" fill="#000" stroke-width=".5"/></g></svg><div class="lab" style="left:1112px">°</div>
<div class="abs" style="left:1180px;top:7px;width:14px;height:14px;background:#fff;border:1px solid #b5b5b5"></div><svg class="abs" style="left:1181px;top:8px" width="12" height="12" viewBox="0 0 12 12"><path d="M2 6l3 3.500 5-8" fill="none" stroke="#000" stroke-width="1.800"/></svg><div class="lab" style="left:1198.7px;font-size:10.8px;letter-spacing:-0.241px">Render</div>
<svg class="abs" style="left:1249px;top:7px" width="16" height="14" viewBox="0 0 16 14"><path d="M8 .500l7 5.500-7 7.500-7-7.500z" fill="#fafafa" stroke="#666" stroke-width=".8"/><ellipse cx="8" cy="7" rx="5.500" ry="5.500" fill="none" stroke="#666" stroke-width=".8"/><path d="M2.500 7h11M8 1.500v11M3.500 4h9M3.500 10h9M8 1.500q-4 5.500 0 11M8 1.500q4 5.500 0 11" fill="none" stroke="#666" stroke-width=".6"/></svg><div class="lab" style="left:1266.4px;font-size:10.6px;letter-spacing:-0.374px">EPSG:4326</div><svg class="abs" style="left:1342px;top:6px" width="18" height="17" viewBox="0 0 18 17"><path d="M9 .800c4.600 0 8 2.700 8 6.200s-2.600 5.800-6.500 6.200c.500 1.300 1.500 2.300 3 3-2.500.300-4.800-.800-6-3.200-3.800-.600-6.500-2.900-6.500-6s3.400-6.200 8-6.200z" fill="#7a7a7a"/></svg>

</div>
<!-- TASKBAR -->
<div id="taskbar" class="abs">
<svg class="abs" style="left:16px;top:12px" width="16" height="16" viewBox="0 0 16 16"><path d="M0 2.300l6.500-.900v6.200h-6.500zM7.300 1.300l8.700-1.300v7.600h-8.700zM0 8.400h6.500v6.200l-6.500-.900zM7.300 8.400h8.700v7.600l-8.700-1.300z" fill="#fff"/></svg><div class="abs" style="left:48px;top:0;width:289px;height:40px;background:#f2f2f2;border:1px solid #d2d2d2;border-top-color:#e8e8e8"></div><svg class="abs" style="left:59px;top:10px" width="20" height="20" viewBox="0 0 20 20"><circle cx="11.500" cy="7.500" r="5.300" fill="none" stroke="#222" stroke-width="1.400"/><path d="M7.700 11.300l-6.200 6.200" stroke="#222" stroke-width="1.500"/></svg><div class="abs" style="left:88px;top:11px;line-height:19px;color:#3a3a3a;white-space:nowrap;font-size:15px;letter-spacing:-0.296px">Type here to search</div>
<svg class="abs" style="left:262px;top:1px" width="74" height="39" viewBox="0 0 74 39">
<path d="M22 39q10-20 24-24 10-3 16 1t12 2v21z" fill="#d3d98a"/>
<path d="M0 39q12-13 26-15 14-2 24 2t24-4v17z" fill="#aeb94a"/>
<path d="M34 39q12-12 24-11t16-3v14z" fill="#8a9c38"/>
<path d="M48 39q8-6 26-7v7z" fill="#6f8a2c"/>
<path d="M30 39q9-4 6-8-3-4 3-7 4-2 2-5" fill="none" stroke="#d9b27a" stroke-width="4.500" stroke-linecap="round"/>
<path d="M33 39q9-4 6-8-3-4 2-7" fill="none" stroke="#b98d58" stroke-width="1.200"/>
<g fill="#8d5d33">
<path d="M6.500 0h4.300l-.6 16 1.600 16.500h-5.600l1.400-16.500z"/>
<path d="M20.500 0h3.600l-.3 14 1.200 14.500h-4.600l.9-14.500z"/>
<path d="M28 0h3l-.2 12 1 12.500h-3.800l.7-12.500z"/>
<path d="M34.500 0h2.600l-.2 10 .8 10.500h-3.200l.5-10.500z"/>
<path d="M56 0h5l-.6 18 2 19.500h-7l2-19.500z"/>
<path d="M66 0h3.600l-.3 11 1.200 13.500h-4.500l.8-13.500z"/>
</g>
<g fill="#b88350"><path d="M6.500 0h1.700l-.4 16 -1.300 16.500h-1.400l1.400-16.500z"/><path d="M56 0h2l-.5 18-1.500 19.500h-1.500l2-19.500z"/><path d="M20.500 0h1.400l-.3 14-.9 14.500h-1.100l.9-14.500z"/><path d="M66 0h1.300l-.3 11-.6 13.500h-1.200l.8-13.500z"/></g>
<g stroke="#8d5d33" stroke-width="1.300" fill="none"><path d="M8.500 7l-4-7M9.500 9l4.500-9M22 6l-3.500-6M23 7l3-7M58 9l-5-9M59 11l6-11M68 7l-3-7M68.500 8l4-8M29.500 5l-2.500-5M35.500 5l2-5"/></g>
</svg>
<svg class="abs" style="left:349px;top:11px" width="22" height="18" viewBox="0 0 22 18"><g fill="none" stroke="#fff" stroke-width="1.200"><path d="M1.500 2.600h12.500M1.500 15.400h12.500M4 2.600v12.800M11.500 2.600v12.800M4 5.600h7.500M4 12.400h7.500"/></g><rect x="16.300" y="2" width="1.500" height="2.600" fill="#fff"/><rect x="16.300" y="6.500" width="1.500" height="9.500" fill="#fff"/></svg>
<div class="abs" style="left:387px;top:0;width:48px;height:40px;background:#41555f"></div><div class="ul" style="left:387px;width:48px;top:37px;height:3px"></div>
<svg class="abs" style="left:399.0px;top:8px;overflow:visible" width="24" height="24" viewBox="0 0 24 24"><circle cx="11" cy="11" r="8.300" fill="none" stroke="#8fb93f" stroke-width="4.400"/><path d="M13.500 13.500l8 8" stroke="#6f9f30" stroke-width="4.400" stroke-linecap="round"/><path d="M8.500 8.500l7 2.200-2.600 1.700-1.700 2.600z" fill="#f0a73a"/><path d="M13 13l4 4" stroke="#c9d96a" stroke-width="1.600"/><circle cx="9.800" cy="9.800" r="1.500" fill="#e2568c"/></svg>
<svg class="abs" style="left:448.0px;top:8px;overflow:visible" width="24" height="24" viewBox="0 0 24 24"><path d="M12 .500l10 5.700v11.600l-10 5.700-10-5.700v-11.600z" fill="#1f6fd0"/><circle cx="12" cy="12" r="6.600" fill="#fff"/><path d="M12 6.500q-4 2-3 6t4.500 4.500q-2-3 .5-5t-2-5.500z" fill="#1f6fd0"/><path d="M14 8q3 2 1.500 6" stroke="#1f6fd0" stroke-width="1.500" fill="none"/></svg>
<svg class="abs" style="left:497.0px;top:8px;overflow:visible" width="24" height="24" viewBox="0 0 24 24"><defs><linearGradient id="eg1" x1="0" y1="0" x2="1" y2="1"><stop offset="0" stop-color="#35c1f1"/><stop offset=".5" stop-color="#2a9be0"/><stop offset="1" stop-color="#0c59a4"/></linearGradient><linearGradient id="eg2" x1="0" y1="0" x2="1" y2="0"><stop offset="0" stop-color="#33c481"/><stop offset="1" stop-color="#6dd96a"/></linearGradient></defs><circle cx="12" cy="12" r="11.300" fill="url(#eg1)"/><path d="M1 10.500q1.500-9.500 11-9.800 9 .2 11 9.300 0 5-5 5.500-3.500 0-3-2.500 1.500-2.500-1-5-4-2.500-8 0-3 2-5 2.500z" fill="url(#eg2)"/><path d="M8 21.500q-4.500-4-3-9 2-4.500 7-4.500-3 2.500-2 6.500 1.500 5 7 6.500-4.500 2.500-9 .5z" fill="#0f4f98"/></svg>
<div class="ul" style="left:489px"></div><svg class="abs" style="left:546.0px;top:8px;overflow:visible" width="24" height="24" viewBox="0 0 24 24"><path d="M1 4q0-1 1-1h7l2 2.500h11q1 0 1 1v2h-22z" fill="#e5a823"/><path d="M1 7.500h22v13q0 1-1 1h-20q-1 0-1-1z" fill="#fbd35b"/><path d="M7 21.500v-6.500h10v6.500" fill="#3b86c8"/><path d="M7 15h10v2h-10z" fill="#5aa5e6"/><rect x="10" y="18.500" width="4" height="3" fill="#fbd35b"/></svg>
<div class="ul" style="left:538px"></div><svg class="abs" style="left:595.0px;top:8px;overflow:visible" width="24" height="24" viewBox="0 0 24 24"><circle cx="12" cy="12" r="11.300" fill="#fff"/><path d="M12 .700a11.300 11.300 0 0 1 9.800 5.650h-9.800a5.650 5.650 0 0 0-4.900 2.800l-4.900-8.450a11.300 11.300 0 0 1 9.800 0z" fill="#e33b2e"/><path d="M2.200 6.350a11.300 11.300 0 0 1 19.600 0h-9.800a5.650 5.650 0 0 0-4.900 2.830z" fill="#e33b2e"/><path d="M21.800 6.350a11.300 11.300 0 0 1-9.800 16.950l4.900-8.480a5.650 5.650 0 0 0 0-5.650v-2.820z" fill="#fbc116"/><path d="M12 23.300a11.300 11.300 0 0 1-9.800-16.950l4.900 8.480a5.650 5.650 0 0 0 4.900 2.820l4.900-2.820z" fill="#2da94f"/><circle cx="12" cy="12" r="5.200" fill="#fff"/><circle cx="12" cy="12" r="4.200" fill="#3f82f0"/></svg>
<div class="ul" style="left:587px"></div><svg class="abs" style="left:644.0px;top:8px;overflow:visible" width="24" height="24" viewBox="0 0 24 24"><path d="M7.500 6v-2.500q0-2 2-2h5q2 0 2 2v2.500" fill="none" stroke="#3aa0e0" stroke-width="1.800"/><path d="M2 6h20v14q0 3-3 3h-14q-3 0-3-3z" fill="#f4f4f4"/><rect x="7" y="10" width="4.300" height="4.300" fill="#f0502a"/><rect x="12.700" y="10" width="4.300" height="4.300" fill="#7dba28"/><rect x="7" y="15.700" width="4.300" height="4.300" fill="#2aa3ee"/><rect x="12.700" y="15.700" width="4.300" height="4.300" fill="#fdb813"/></svg>
<svg class="abs" style="left:692.5px;top:8px;overflow:visible" width="25" height="25" viewBox="0 0 24 24"><path d="M.500 8l11.500-7.500 11.500 7.500v14h-23z" fill="#1a73c9"/><path d="M.500 8.500l11.500 7.500 11.500-7.500v13.500h-23z" fill="#35a9ea"/><path d="M.500 22l11.500-9 11.500 9z" fill="#1e8fdb"/><path d="M.500 8.500l11.500 7.500 11.500-7.500" fill="none" stroke="#7fd0f7" stroke-width=".8"/></svg>
<svg class="abs" style="left:742.5px;top:9px;overflow:visible" width="23" height="23" viewBox="0 0 24 24"><ellipse cx="11" cy="9" rx="10.300" ry="6.300" transform="rotate(-14 11 9)" fill="#f6f6f6" stroke="#e0685a" stroke-width="1.900"/><path d="M8 5l9 12M15.500 5.500l-5 11.500" stroke="#8aa0b5" stroke-width="1.200"/><circle cx="10" cy="18.800" r="2.100" fill="none" stroke="#2f90dc" stroke-width="1.500"/><circle cx="18" cy="19.300" r="2.100" fill="none" stroke="#2f90dc" stroke-width="1.500"/></svg>
<div class="ul" style="left:734px"></div><svg class="abs" style="left:790.0px;top:7px;overflow:visible" width="26" height="26" viewBox="0 0 24 24"><path d="M5 2q-4 1.500-3.500 8t4 11q1.500 1.500 3-.5l1.700-4.500q.5 5.500 2.300 7.500t4 .5q1.700-1 1.700-4.500v-5q3 0 4-4t-1.700-7-6.500-3-5.500 1.500q-1.800-1.500-3.500 0z" fill="#386c9c" stroke="#eef4fb" stroke-width="1"/><path d="M9.700 3.500q-.8 6.500.8 11.500M17.500 14.500q-2.500-1.500-1.700-6.500M12.500 4q3-1.500 5.500 0" fill="none" stroke="#eef4fb" stroke-width=".9"/><circle cx="17" cy="7" r=".900" fill="#fff"/><circle cx="8" cy="7" r=".800" fill="#fff"/></svg>
<svg class="abs" style="left:839.0px;top:7px;overflow:visible" width="26" height="26" viewBox="0 0 24 24"><circle cx="17.500" cy="5.500" r="3" fill="#6b73cc"/><circle cx="22" cy="7" r="2" fill="#6b73cc"/><path d="M12 9h10q1.500 0 1.500 1.500v6q0 5-5 5t-6.500-3z" fill="#7f86dd"/><rect x=".500" y="6" width="14" height="14" rx="1.500" fill="#4c53b5"/><path d="M4 9.800h7M7.500 9.800v7.400" stroke="#fff" stroke-width="1.800"/></svg>
<div class="ul" style="left:832px"></div><svg class="abs" style="left:888.0px;top:7px;overflow:visible" width="26" height="26" viewBox="0 0 24 24"><path d="M5 2q-4 1.500-3.500 8t4 11q1.500 1.500 3-.5l1.700-4.500q.5 5.500 2.300 7.500t4 .5q1.700-1 1.700-4.500v-5q3 0 4-4t-1.700-7-6.500-3-5.500 1.500q-1.800-1.500-3.500 0z" fill="#386c9c" stroke="#eef4fb" stroke-width="1"/><path d="M9.700 3.500q-.8 6.500.8 11.500M17.500 14.500q-2.500-1.500-1.700-6.500M12.500 4q3-1.500 5.500 0" fill="none" stroke="#eef4fb" stroke-width=".9"/><circle cx="17" cy="7" r=".900" fill="#fff"/><circle cx="8" cy="7" r=".800" fill="#fff"/></svg>
<div class="ul" style="left:881px"></div>
<svg class="abs" style="left:1021px;top:8px" width="28" height="26" viewBox="0 0 28 26"><defs><radialGradient id="sun" cx=".4" cy=".35" r=".8"><stop offset="0" stop-color="#fdb73a"/><stop offset="1" stop-color="#ee7d1b"/></radialGradient></defs><circle cx="12" cy="12.500" r="10.500" fill="url(#sun)"/><circle cx="20.700" cy="3.500" r="3" fill="#e23d28"/></svg><div class="abs" style="left:1053px;top:11px;line-height:19px;color:#fff;white-space:nowrap;font-size:13.2px;letter-spacing:-0.456px">19°C</div>
<svg class="abs" style="left:1099px;top:15px" width="14" height="9" viewBox="0 0 14 9"><path d="M1 8l6-6.500 6 6.500" fill="none" stroke="#fff" stroke-width="1.300"/></svg><svg class="abs" style="left:1121px;top:11px" width="18" height="18" viewBox="0 0 24 24"><circle cx="17.500" cy="5.500" r="3" fill="#7b83eb"/><path d="M12 9h10q1.500 0 1.500 1.500v6q0 5-5 5t-6.500-3z" fill="#7b83eb"/><rect x=".500" y="6" width="14" height="14" rx="1.500" fill="#4c53b5"/><path d="M4 9.800h7M7.500 9.800v7.400" stroke="#fff" stroke-width="1.900"/></svg><svg class="abs" style="left:1146px;top:11px" width="17" height="18" viewBox="0 0 17 18"><g fill="none" stroke="#fff" stroke-width="1.200"><rect x="1.500" y="4.500" width="9" height="9" rx="2"/><path d="M10.500 8l4.500-2.500v7l-4.500-2.500"/><path d="M3.500 2q2.500-1.500 5 0M3.500 16q2.500 1.500 5 0"/></g><circle cx="6" cy="9" r="1.500" fill="#fff"/></svg><svg class="abs" style="left:1169px;top:11px" width="19" height="18" viewBox="0 0 19 18"><g fill="none" stroke="#fff" stroke-width="1.200"><path d="M1.500 6.500h3l4-4v13l-4-4h-3z"/><path d="M11 6.500q1.700 2.500 0 5M13.300 4.500q3 4.500 0 9M15.600 2.500q4.300 6.500 0 13"/></g></svg><svg class="abs" style="left:1193px;top:11px" width="19" height="18" viewBox="0 0 19 18"><g fill="none" stroke="#fff" stroke-width="1.200"><rect x="4.500" y="2.500" width="13" height="9.500"/><path d="M11 12v3.500M7 15.500h8"/><rect x="1.500" y="1" width="4.500" height="4.500" fill="#1b2c41"/></g></svg><div class="abs" style="left:1220.500px;top:13px;line-height:14px;color:#fff;font-size:10.8px;letter-spacing:-0.522px">ENG</div>
<div class="abs" style="left:1263px;top:5px;line-height:14px;color:#fff;font-size:11.7px;letter-spacing:-0.462px">01:02</div><svg class="abs" style="left:1291px;top:7px;overflow:visible" width="9" height="12" viewBox="0 0 9 12"><path d="M7.500 5.500q-.200-2.300-2-2.300-1.700 0-1.700 1.600 0 1.400 1.800 1.400h2.200M3.800 5.600q-2.500.400-2.300 5.400" fill="none" stroke="#fff" stroke-width="1.100" stroke-linecap="round"/></svg><svg class="abs" style="left:1255.5px;top:23.2px;overflow:visible" width="54" height="11" viewBox="0 0 54 11"><g fill="none" stroke="#fff" stroke-width="1.05" stroke-linecap="round" stroke-linejoin="round" transform="scale(1.0)"><path transform="translate(0.00,0)" d="M5.400 .600q.100 2.300-1.600 2.300-1.700 0-1.900-2.100 .300 4.200 1.300 8.200"/><path transform="translate(5.20,0)" d="M3 4.300l1.300 1.400-1.300 1.400-1.300-1.400z" fill="#fff" stroke-width=".5"/><path transform="translate(10.40,0)" d="M5.400 .600q.100 2.300-1.600 2.300-1.700 0-1.900-2.100 .300 4.200 1.300 8.200"/><path transform="translate(15.60,0)" d="M5.600 .600q.100 2.100-1 2.100-1 0-1-1.700 0 1.700-1 1.700-.900 0-1-1.900 .300 4.200 1.200 8.200"/><path transform="translate(20.80,0)" d="M4 -.500L.800 10.500"/><path transform="translate(25.40,0)" d="M3 4.300l1.300 1.400-1.300 1.400-1.300-1.400z" fill="#fff" stroke-width=".5"/><path transform="translate(30.60,0)" d="M2.500 .700q.600 3.600.900 8.300"/><path transform="translate(35.80,0)" d="M4 -.500L.800 10.500"/><path transform="translate(40.40,0)" d="M5.600 .600q.100 2.100-1 2.100-1 0-1-1.700 0 1.700-1 1.700-.900 0-1-1.900 .300 4.200 1.200 8.200"/><path transform="translate(45.60,0)" d="M3 4.300l1.300 1.400-1.300 1.400-1.300-1.400z" fill="#fff" stroke-width=".5"/></g></svg><svg class="abs" style="left:1323px;top:11px;overflow:visible" width="26" height="24" viewBox="0 0 26 24"><path d="M1.500 1.500h16v11h-11l-3 3v-3h-2z" fill="#fff"/><path d="M4 4.500h11M4 7h11M4 9.500h8" stroke="#1b2c41" stroke-width="1"/><circle cx="17.500" cy="16" r="7.300" fill="#1d2c40" stroke="#8d95a0" stroke-width="1"/><path d="M17.300 12.300q.700 3 .900 7" fill="none" stroke="#fff" stroke-width="1.100" stroke-linecap="round"/></svg>
<div class="abs" style="left:1361px;top:0;width:1px;height:40px;background:#4a5868"></div>

</div>
<svg class="abs" style="left:0;top:0;overflow:visible;opacity:.42;pointer-events:none" width="1366" height="768" viewBox="0 0 1366 768">
<g fill="none" stroke="rgb(214,214,214)" stroke-width="7.6" stroke-linecap="round" stroke-linejoin="round">
<path d="M627.500 680.500V713q0 10.500-10 10.500h-5.500q-9 0-9.500-9.500l.300-6"/>
<path d="M627.500 713.500H741"/>
<circle cx="655.500" cy="705" r="6.800"/>
<path d="M684.500 713v-9M702 713v-9M714 713v-8M726.500 713v-9.500"/>
<circle cx="751.500" cy="706.500" r="7.300"/>
</g>
<g fill="rgb(214,214,214)"><circle cx="650" cy="681.500" r="3.900"/><circle cx="661.500" cy="681.500" r="3.900"/><circle cx="679" cy="691.500" r="3.700"/><circle cx="690" cy="691.500" r="3.700"/></g>
</svg>
<div class="abs" style="left:602.5px;top:718.5px;line-height:36px;font-size:30.5px;font-weight:bold;color:rgba(214,214,214,.42);white-space:nowrap;transform-origin:0 0;transform:scaleX(0.8590)">mostaql.com</div>

</body>
</html>
